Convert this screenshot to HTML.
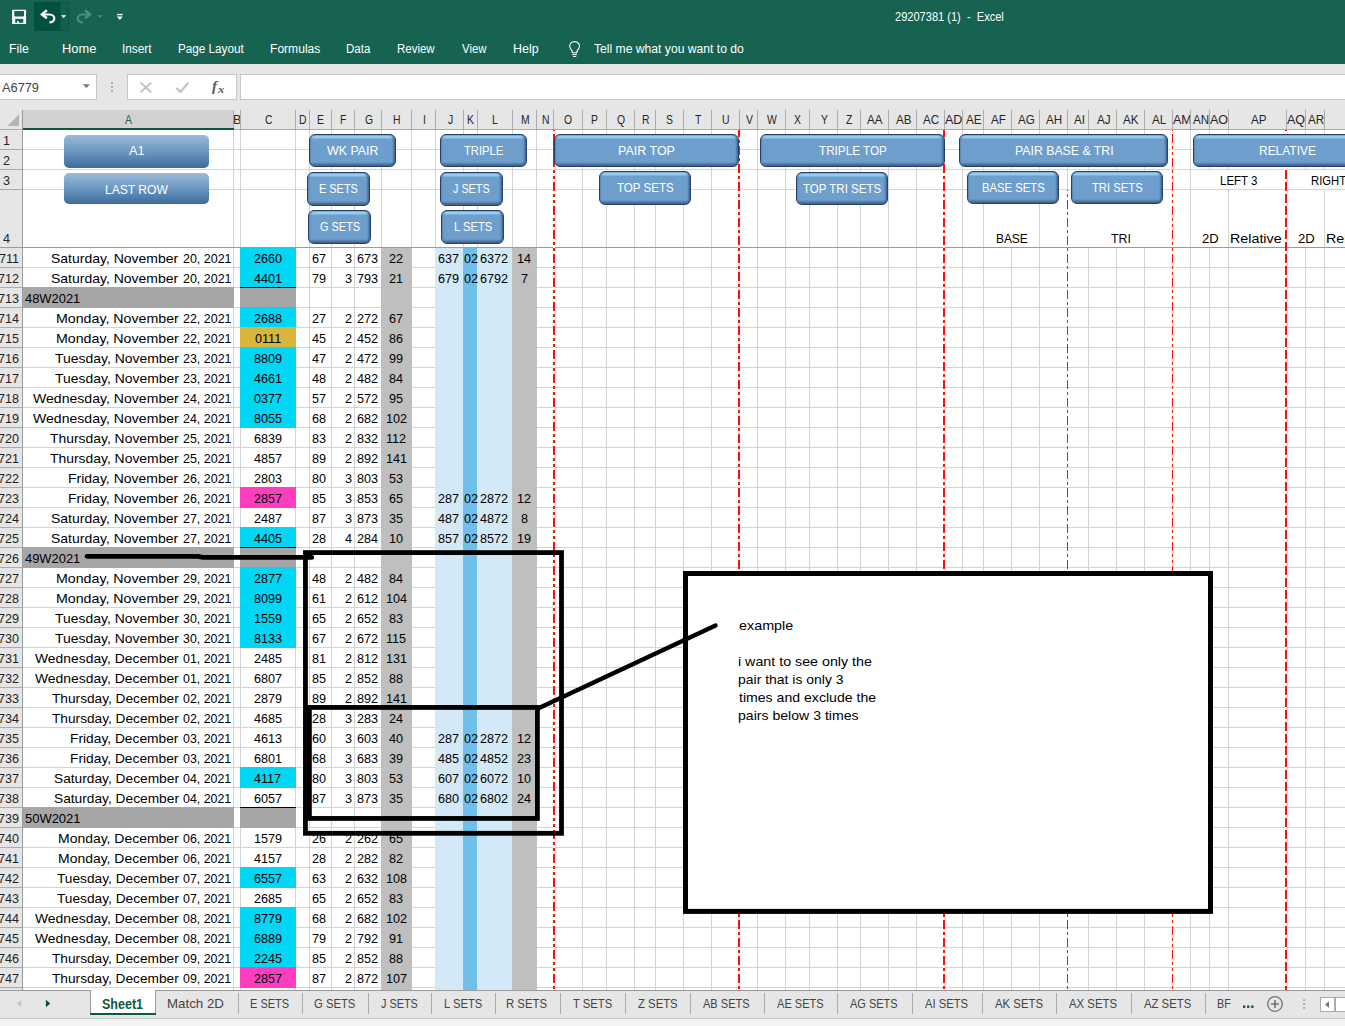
<!DOCTYPE html>
<html lang="en"><head><meta charset="utf-8"><title>29207381 (1) - Excel</title><style>
html,body{margin:0;padding:0}
body{width:1345px;height:1026px;overflow:hidden;position:relative;background:#fff;font-family:"Liberation Sans", sans-serif}
.r{position:absolute;display:block}
.t{position:absolute;white-space:pre;transform-origin:0 50%;display:block}
.gb{position:absolute;border-radius:5px;background:linear-gradient(#9cbbd8 0%,#6f9bc6 45%,#3d6c9b 100%)}
.bb{position:absolute;border:1px solid #25406b;border-radius:6px;background:linear-gradient(#74a6d2 0,#97d0ef 1.4px,#95cceb 2.4px,#6e9fcc 4.4px,#6e9fcc calc(100% - 4px),#52779f calc(100% - 1.8px),#3e5c86 100%);box-shadow:inset -2.5px 0 2px -1px #3f628e,inset 2px 0 1.5px -1px #5a86b4}
</style></head>
<body>
<div class="r" style="left:0;top:110px;width:1345px;height:880px;background:#fff"></div>
<svg class="r" style="left:0;top:0" width="1345" height="1026" shape-rendering="crispEdges"><rect x="233" y="130" width="1" height="20" fill="#d4d4d4"/><rect x="233" y="150" width="1" height="20" fill="#d4d4d4"/><rect x="233" y="170" width="1" height="20" fill="#d4d4d4"/><rect x="233" y="190" width="1" height="58" fill="#d4d4d4"/><rect x="233" y="248" width="1" height="742" fill="#d4d4d4"/><rect x="240" y="130" width="1" height="20" fill="#d4d4d4"/><rect x="240" y="150" width="1" height="20" fill="#d4d4d4"/><rect x="240" y="170" width="1" height="20" fill="#d4d4d4"/><rect x="240" y="190" width="1" height="58" fill="#d4d4d4"/><rect x="240" y="248" width="1" height="742" fill="#d4d4d4"/><rect x="295" y="130" width="1" height="20" fill="#d4d4d4"/><rect x="295" y="150" width="1" height="20" fill="#d4d4d4"/><rect x="295" y="170" width="1" height="20" fill="#d4d4d4"/><rect x="295" y="190" width="1" height="58" fill="#d4d4d4"/><rect x="295" y="248" width="1" height="742" fill="#d4d4d4"/><rect x="309" y="130" width="1" height="20" fill="#d4d4d4"/><rect x="309" y="150" width="1" height="20" fill="#d4d4d4"/><rect x="309" y="170" width="1" height="20" fill="#d4d4d4"/><rect x="309" y="190" width="1" height="58" fill="#d4d4d4"/><rect x="309" y="248" width="1" height="742" fill="#d4d4d4"/><rect x="331" y="130" width="1" height="20" fill="#d4d4d4"/><rect x="331" y="150" width="1" height="20" fill="#d4d4d4"/><rect x="331" y="170" width="1" height="20" fill="#d4d4d4"/><rect x="331" y="190" width="1" height="58" fill="#d4d4d4"/><rect x="331" y="248" width="1" height="742" fill="#d4d4d4"/><rect x="354" y="130" width="1" height="20" fill="#d4d4d4"/><rect x="354" y="150" width="1" height="20" fill="#d4d4d4"/><rect x="354" y="170" width="1" height="20" fill="#d4d4d4"/><rect x="354" y="190" width="1" height="58" fill="#d4d4d4"/><rect x="354" y="248" width="1" height="742" fill="#d4d4d4"/><rect x="381" y="130" width="1" height="20" fill="#d4d4d4"/><rect x="381" y="150" width="1" height="20" fill="#d4d4d4"/><rect x="381" y="170" width="1" height="20" fill="#d4d4d4"/><rect x="381" y="190" width="1" height="58" fill="#d4d4d4"/><rect x="381" y="248" width="1" height="742" fill="#d4d4d4"/><rect x="411" y="130" width="1" height="20" fill="#d4d4d4"/><rect x="411" y="150" width="1" height="20" fill="#d4d4d4"/><rect x="411" y="170" width="1" height="20" fill="#d4d4d4"/><rect x="411" y="190" width="1" height="58" fill="#d4d4d4"/><rect x="411" y="248" width="1" height="742" fill="#d4d4d4"/><rect x="435" y="130" width="1" height="20" fill="#d4d4d4"/><rect x="435" y="150" width="1" height="20" fill="#d4d4d4"/><rect x="435" y="170" width="1" height="20" fill="#d4d4d4"/><rect x="435" y="190" width="1" height="58" fill="#d4d4d4"/><rect x="435" y="248" width="1" height="742" fill="#d4d4d4"/><rect x="463" y="130" width="1" height="20" fill="#d4d4d4"/><rect x="463" y="150" width="1" height="20" fill="#d4d4d4"/><rect x="463" y="170" width="1" height="20" fill="#d4d4d4"/><rect x="463" y="190" width="1" height="58" fill="#d4d4d4"/><rect x="463" y="248" width="1" height="742" fill="#d4d4d4"/><rect x="477" y="130" width="1" height="20" fill="#d4d4d4"/><rect x="477" y="150" width="1" height="20" fill="#d4d4d4"/><rect x="477" y="170" width="1" height="20" fill="#d4d4d4"/><rect x="477" y="190" width="1" height="58" fill="#d4d4d4"/><rect x="477" y="248" width="1" height="742" fill="#d4d4d4"/><rect x="512" y="130" width="1" height="20" fill="#d4d4d4"/><rect x="512" y="150" width="1" height="20" fill="#d4d4d4"/><rect x="512" y="170" width="1" height="20" fill="#d4d4d4"/><rect x="512" y="190" width="1" height="58" fill="#d4d4d4"/><rect x="512" y="248" width="1" height="742" fill="#d4d4d4"/><rect x="536" y="130" width="1" height="20" fill="#d4d4d4"/><rect x="536" y="150" width="1" height="20" fill="#d4d4d4"/><rect x="536" y="170" width="1" height="20" fill="#d4d4d4"/><rect x="536" y="190" width="1" height="58" fill="#d4d4d4"/><rect x="536" y="248" width="1" height="742" fill="#d4d4d4"/><rect x="582" y="130" width="1" height="20" fill="#d4d4d4"/><rect x="582" y="150" width="1" height="20" fill="#d4d4d4"/><rect x="582" y="170" width="1" height="20" fill="#d4d4d4"/><rect x="582" y="190" width="1" height="58" fill="#d4d4d4"/><rect x="582" y="248" width="1" height="742" fill="#d4d4d4"/><rect x="606" y="130" width="1" height="20" fill="#d4d4d4"/><rect x="606" y="150" width="1" height="20" fill="#d4d4d4"/><rect x="606" y="170" width="1" height="20" fill="#d4d4d4"/><rect x="606" y="190" width="1" height="58" fill="#d4d4d4"/><rect x="606" y="248" width="1" height="742" fill="#d4d4d4"/><rect x="634" y="130" width="1" height="20" fill="#d4d4d4"/><rect x="634" y="150" width="1" height="20" fill="#d4d4d4"/><rect x="634" y="170" width="1" height="20" fill="#d4d4d4"/><rect x="634" y="190" width="1" height="58" fill="#d4d4d4"/><rect x="634" y="248" width="1" height="742" fill="#d4d4d4"/><rect x="655" y="130" width="1" height="20" fill="#d4d4d4"/><rect x="655" y="150" width="1" height="20" fill="#d4d4d4"/><rect x="655" y="170" width="1" height="20" fill="#d4d4d4"/><rect x="655" y="190" width="1" height="58" fill="#d4d4d4"/><rect x="655" y="248" width="1" height="742" fill="#d4d4d4"/><rect x="683" y="130" width="1" height="20" fill="#d4d4d4"/><rect x="683" y="150" width="1" height="20" fill="#d4d4d4"/><rect x="683" y="170" width="1" height="20" fill="#d4d4d4"/><rect x="683" y="190" width="1" height="58" fill="#d4d4d4"/><rect x="683" y="248" width="1" height="742" fill="#d4d4d4"/><rect x="711" y="130" width="1" height="20" fill="#d4d4d4"/><rect x="711" y="150" width="1" height="20" fill="#d4d4d4"/><rect x="711" y="170" width="1" height="20" fill="#d4d4d4"/><rect x="711" y="190" width="1" height="58" fill="#d4d4d4"/><rect x="711" y="248" width="1" height="742" fill="#d4d4d4"/><rect x="757" y="130" width="1" height="20" fill="#d4d4d4"/><rect x="757" y="150" width="1" height="20" fill="#d4d4d4"/><rect x="757" y="170" width="1" height="20" fill="#d4d4d4"/><rect x="757" y="190" width="1" height="58" fill="#d4d4d4"/><rect x="757" y="248" width="1" height="742" fill="#d4d4d4"/><rect x="785" y="130" width="1" height="20" fill="#d4d4d4"/><rect x="785" y="150" width="1" height="20" fill="#d4d4d4"/><rect x="785" y="170" width="1" height="20" fill="#d4d4d4"/><rect x="785" y="190" width="1" height="58" fill="#d4d4d4"/><rect x="785" y="248" width="1" height="742" fill="#d4d4d4"/><rect x="809" y="130" width="1" height="20" fill="#d4d4d4"/><rect x="809" y="150" width="1" height="20" fill="#d4d4d4"/><rect x="809" y="170" width="1" height="20" fill="#d4d4d4"/><rect x="809" y="190" width="1" height="58" fill="#d4d4d4"/><rect x="809" y="248" width="1" height="742" fill="#d4d4d4"/><rect x="837" y="130" width="1" height="20" fill="#d4d4d4"/><rect x="837" y="150" width="1" height="20" fill="#d4d4d4"/><rect x="837" y="170" width="1" height="20" fill="#d4d4d4"/><rect x="837" y="190" width="1" height="58" fill="#d4d4d4"/><rect x="837" y="248" width="1" height="742" fill="#d4d4d4"/><rect x="860" y="130" width="1" height="20" fill="#d4d4d4"/><rect x="860" y="150" width="1" height="20" fill="#d4d4d4"/><rect x="860" y="170" width="1" height="20" fill="#d4d4d4"/><rect x="860" y="190" width="1" height="58" fill="#d4d4d4"/><rect x="860" y="248" width="1" height="742" fill="#d4d4d4"/><rect x="888" y="130" width="1" height="20" fill="#d4d4d4"/><rect x="888" y="150" width="1" height="20" fill="#d4d4d4"/><rect x="888" y="170" width="1" height="20" fill="#d4d4d4"/><rect x="888" y="190" width="1" height="58" fill="#d4d4d4"/><rect x="888" y="248" width="1" height="742" fill="#d4d4d4"/><rect x="916" y="130" width="1" height="20" fill="#d4d4d4"/><rect x="916" y="150" width="1" height="20" fill="#d4d4d4"/><rect x="916" y="170" width="1" height="20" fill="#d4d4d4"/><rect x="916" y="190" width="1" height="58" fill="#d4d4d4"/><rect x="916" y="248" width="1" height="742" fill="#d4d4d4"/><rect x="962" y="130" width="1" height="20" fill="#d4d4d4"/><rect x="962" y="150" width="1" height="20" fill="#d4d4d4"/><rect x="962" y="170" width="1" height="20" fill="#d4d4d4"/><rect x="962" y="190" width="1" height="58" fill="#d4d4d4"/><rect x="962" y="248" width="1" height="742" fill="#d4d4d4"/><rect x="983" y="130" width="1" height="20" fill="#d4d4d4"/><rect x="983" y="150" width="1" height="20" fill="#d4d4d4"/><rect x="983" y="170" width="1" height="20" fill="#d4d4d4"/><rect x="983" y="190" width="1" height="58" fill="#d4d4d4"/><rect x="983" y="248" width="1" height="742" fill="#d4d4d4"/><rect x="1011" y="130" width="1" height="20" fill="#d4d4d4"/><rect x="1011" y="150" width="1" height="20" fill="#d4d4d4"/><rect x="1011" y="170" width="1" height="20" fill="#d4d4d4"/><rect x="1011" y="248" width="1" height="742" fill="#d4d4d4"/><rect x="1039" y="130" width="1" height="20" fill="#d4d4d4"/><rect x="1039" y="150" width="1" height="20" fill="#d4d4d4"/><rect x="1039" y="170" width="1" height="20" fill="#d4d4d4"/><rect x="1039" y="190" width="1" height="58" fill="#d4d4d4"/><rect x="1039" y="248" width="1" height="742" fill="#d4d4d4"/><rect x="1067" y="130" width="1" height="20" fill="#d4d4d4"/><rect x="1067" y="150" width="1" height="20" fill="#d4d4d4"/><rect x="1067" y="170" width="1" height="20" fill="#d4d4d4"/><rect x="1088" y="130" width="1" height="20" fill="#d4d4d4"/><rect x="1088" y="150" width="1" height="20" fill="#d4d4d4"/><rect x="1088" y="170" width="1" height="20" fill="#d4d4d4"/><rect x="1088" y="248" width="1" height="742" fill="#d4d4d4"/><rect x="1116" y="130" width="1" height="20" fill="#d4d4d4"/><rect x="1116" y="150" width="1" height="20" fill="#d4d4d4"/><rect x="1116" y="170" width="1" height="20" fill="#d4d4d4"/><rect x="1116" y="248" width="1" height="742" fill="#d4d4d4"/><rect x="1144" y="130" width="1" height="20" fill="#d4d4d4"/><rect x="1144" y="150" width="1" height="20" fill="#d4d4d4"/><rect x="1144" y="170" width="1" height="20" fill="#d4d4d4"/><rect x="1144" y="248" width="1" height="742" fill="#d4d4d4"/><rect x="1190" y="130" width="1" height="20" fill="#d4d4d4"/><rect x="1190" y="150" width="1" height="20" fill="#d4d4d4"/><rect x="1190" y="170" width="1" height="20" fill="#d4d4d4"/><rect x="1190" y="190" width="1" height="58" fill="#d4d4d4"/><rect x="1190" y="248" width="1" height="742" fill="#d4d4d4"/><rect x="1209" y="130" width="1" height="20" fill="#d4d4d4"/><rect x="1209" y="150" width="1" height="20" fill="#d4d4d4"/><rect x="1209" y="248" width="1" height="742" fill="#d4d4d4"/><rect x="1228" y="130" width="1" height="20" fill="#d4d4d4"/><rect x="1228" y="150" width="1" height="20" fill="#d4d4d4"/><rect x="1228" y="190" width="1" height="58" fill="#d4d4d4"/><rect x="1228" y="248" width="1" height="742" fill="#d4d4d4"/><rect x="1305" y="130" width="1" height="20" fill="#d4d4d4"/><rect x="1305" y="150" width="1" height="20" fill="#d4d4d4"/><rect x="1305" y="248" width="1" height="742" fill="#d4d4d4"/><rect x="1324" y="130" width="1" height="20" fill="#d4d4d4"/><rect x="1324" y="150" width="1" height="20" fill="#d4d4d4"/><rect x="1324" y="190" width="1" height="58" fill="#d4d4d4"/><rect x="1324" y="248" width="1" height="742" fill="#d4d4d4"/><rect x="23" y="149" width="1322" height="1" fill="#d4d4d4"/><rect x="23" y="169" width="1322" height="1" fill="#d4d4d4"/><rect x="23" y="189" width="1322" height="1" fill="#d4d4d4"/><rect x="23" y="267" width="1322" height="1" fill="#d4d4d4"/><rect x="23" y="287" width="1322" height="1" fill="#d4d4d4"/><rect x="23" y="307" width="1322" height="1" fill="#d4d4d4"/><rect x="23" y="327" width="1322" height="1" fill="#d4d4d4"/><rect x="23" y="347" width="1322" height="1" fill="#d4d4d4"/><rect x="23" y="367" width="1322" height="1" fill="#d4d4d4"/><rect x="23" y="387" width="1322" height="1" fill="#d4d4d4"/><rect x="23" y="407" width="1322" height="1" fill="#d4d4d4"/><rect x="23" y="427" width="1322" height="1" fill="#d4d4d4"/><rect x="23" y="447" width="1322" height="1" fill="#d4d4d4"/><rect x="23" y="467" width="1322" height="1" fill="#d4d4d4"/><rect x="23" y="487" width="1322" height="1" fill="#d4d4d4"/><rect x="23" y="507" width="1322" height="1" fill="#d4d4d4"/><rect x="23" y="527" width="1322" height="1" fill="#d4d4d4"/><rect x="23" y="547" width="1322" height="1" fill="#d4d4d4"/><rect x="23" y="567" width="1322" height="1" fill="#d4d4d4"/><rect x="23" y="587" width="1322" height="1" fill="#d4d4d4"/><rect x="23" y="607" width="1322" height="1" fill="#d4d4d4"/><rect x="23" y="627" width="1322" height="1" fill="#d4d4d4"/><rect x="23" y="647" width="1322" height="1" fill="#d4d4d4"/><rect x="23" y="667" width="1322" height="1" fill="#d4d4d4"/><rect x="23" y="687" width="1322" height="1" fill="#d4d4d4"/><rect x="23" y="707" width="1322" height="1" fill="#d4d4d4"/><rect x="23" y="727" width="1322" height="1" fill="#d4d4d4"/><rect x="23" y="747" width="1322" height="1" fill="#d4d4d4"/><rect x="23" y="767" width="1322" height="1" fill="#d4d4d4"/><rect x="23" y="787" width="1322" height="1" fill="#d4d4d4"/><rect x="23" y="807" width="1322" height="1" fill="#d4d4d4"/><rect x="23" y="827" width="1322" height="1" fill="#d4d4d4"/><rect x="23" y="847" width="1322" height="1" fill="#d4d4d4"/><rect x="23" y="867" width="1322" height="1" fill="#d4d4d4"/><rect x="23" y="887" width="1322" height="1" fill="#d4d4d4"/><rect x="23" y="907" width="1322" height="1" fill="#d4d4d4"/><rect x="23" y="927" width="1322" height="1" fill="#d4d4d4"/><rect x="23" y="947" width="1322" height="1" fill="#d4d4d4"/><rect x="23" y="967" width="1322" height="1" fill="#d4d4d4"/><rect x="23" y="987" width="1322" height="1" fill="#d4d4d4"/></svg>
<div class="r" style="left:381px;top:247px;width:31px;height:741px;background:#bfbfbf;"></div>
<div class="r" style="left:435px;top:247px;width:29px;height:741px;background:#d3e9f7;"></div>
<div class="r" style="left:463px;top:247px;width:15px;height:741px;background:#6ec0eb;"></div>
<div class="r" style="left:477px;top:247px;width:36px;height:741px;background:#d3e9f7;"></div>
<div class="r" style="left:512px;top:247px;width:25px;height:741px;background:#bfbfbf;"></div>
<div class="r" style="left:381px;top:988px;width:31px;height:2px;background:#bfbfbf;"></div>
<div class="r" style="left:435px;top:988px;width:29px;height:2px;background:#d3e9f7;"></div>
<div class="r" style="left:463px;top:988px;width:15px;height:2px;background:#6ec0eb;"></div>
<div class="r" style="left:477px;top:988px;width:36px;height:2px;background:#d3e9f7;"></div>
<div class="r" style="left:512px;top:988px;width:25px;height:2px;background:#bfbfbf;"></div>
<div class="r" style="left:240px;top:247px;width:56px;height:21px;background:#00d7f5;"></div>
<div class="r" style="left:240px;top:267px;width:56px;height:21px;background:#00d7f5;"></div>
<div class="r" style="left:22px;top:287px;width:212px;height:21px;background:#a6a6a6;"></div>
<div class="r" style="left:240px;top:287px;width:56px;height:21px;background:#a6a6a6;"></div>
<div class="r" style="left:240px;top:307px;width:56px;height:21px;background:#00d7f5;"></div>
<div class="r" style="left:240px;top:327px;width:56px;height:21px;background:#d9b53b;"></div>
<div class="r" style="left:240px;top:347px;width:56px;height:21px;background:#00d7f5;"></div>
<div class="r" style="left:240px;top:367px;width:56px;height:21px;background:#00d7f5;"></div>
<div class="r" style="left:240px;top:387px;width:56px;height:21px;background:#00d7f5;"></div>
<div class="r" style="left:240px;top:407px;width:56px;height:21px;background:#00d7f5;"></div>
<div class="r" style="left:240px;top:487px;width:56px;height:21px;background:#ff3ebf;"></div>
<div class="r" style="left:240px;top:527px;width:56px;height:21px;background:#00d7f5;"></div>
<div class="r" style="left:22px;top:547px;width:212px;height:21px;background:#a6a6a6;"></div>
<div class="r" style="left:240px;top:547px;width:56px;height:21px;background:#a6a6a6;"></div>
<div class="r" style="left:240px;top:567px;width:56px;height:21px;background:#00d7f5;"></div>
<div class="r" style="left:240px;top:587px;width:56px;height:21px;background:#00d7f5;"></div>
<div class="r" style="left:240px;top:607px;width:56px;height:21px;background:#00d7f5;"></div>
<div class="r" style="left:240px;top:627px;width:56px;height:21px;background:#00d7f5;"></div>
<div class="r" style="left:240px;top:767px;width:56px;height:21px;background:#00d7f5;"></div>
<div class="r" style="left:22px;top:807px;width:212px;height:21px;background:#a6a6a6;"></div>
<div class="r" style="left:240px;top:807px;width:56px;height:21px;background:#a6a6a6;"></div>
<div class="r" style="left:240px;top:867px;width:56px;height:21px;background:#00d7f5;"></div>
<div class="r" style="left:240px;top:907px;width:56px;height:21px;background:#00d7f5;"></div>
<div class="r" style="left:240px;top:927px;width:56px;height:21px;background:#00d7f5;"></div>
<div class="r" style="left:240px;top:947px;width:56px;height:21px;background:#00d7f5;"></div>
<div class="r" style="left:240px;top:967px;width:56px;height:21px;background:#ff3ebf;"></div>
<div class="r" style="left:0px;top:247px;width:1345px;height:1px;background:#9b9b9b;"></div>
<div class="r" style="left:240px;top:287px;width:56px;height:1px;background:#000;"></div>
<div class="r" style="left:240px;top:547px;width:56px;height:1px;background:#000;"></div>
<div class="r" style="left:240px;top:807px;width:56px;height:1px;background:#000;"></div>
<span class="t" style="left:51.47px;top:248.07px;font-size:13.5px;line-height:22px;color:#000;transform:scaleX(1.0361);">Saturday, November</span>
<span class="t" style="left:182.51px;top:248.07px;font-size:13.5px;line-height:22px;color:#000;transform:scaleX(0.9229);">20, 2021</span>
<span class="t" style="left:253.95px;top:248.07px;font-size:13.5px;line-height:22px;color:#000;transform:scaleX(0.9350);">2660</span>
<span class="t" style="left:311.80px;top:248.07px;font-size:13.5px;line-height:22px;color:#000;transform:scaleX(0.9350);">67</span>
<span class="t" style="left:344.57px;top:248.07px;font-size:13.5px;line-height:22px;color:#000;transform:scaleX(0.9350);">3</span>
<span class="t" style="left:357.17px;top:248.07px;font-size:13.5px;line-height:22px;color:#000;transform:scaleX(0.9350);">673</span>
<span class="t" style="left:389.47px;top:248.07px;font-size:13.5px;line-height:22px;color:#000;transform:scaleX(0.9350);">22</span>
<span class="t" style="left:438.17px;top:248.07px;font-size:13.5px;line-height:22px;color:#000;transform:scaleX(0.9350);">637</span>
<span class="t" style="left:464.07px;top:248.07px;font-size:13.5px;line-height:22px;color:#000;transform:scaleX(0.9350);">02</span>
<span class="t" style="left:480.05px;top:248.07px;font-size:13.5px;line-height:22px;color:#000;transform:scaleX(0.9350);">6372</span>
<span class="t" style="left:517.47px;top:248.07px;font-size:13.5px;line-height:22px;color:#000;transform:scaleX(0.9350);">14</span>
<span class="t" style="left:51.47px;top:268.07px;font-size:13.5px;line-height:22px;color:#000;transform:scaleX(1.0361);">Saturday, November</span>
<span class="t" style="left:182.51px;top:268.07px;font-size:13.5px;line-height:22px;color:#000;transform:scaleX(0.9229);">20, 2021</span>
<span class="t" style="left:253.95px;top:268.07px;font-size:13.5px;line-height:22px;color:#000;transform:scaleX(0.9350);">4401</span>
<span class="t" style="left:311.80px;top:268.07px;font-size:13.5px;line-height:22px;color:#000;transform:scaleX(0.9350);">79</span>
<span class="t" style="left:344.57px;top:268.07px;font-size:13.5px;line-height:22px;color:#000;transform:scaleX(0.9350);">3</span>
<span class="t" style="left:357.17px;top:268.07px;font-size:13.5px;line-height:22px;color:#000;transform:scaleX(0.9350);">793</span>
<span class="t" style="left:389.47px;top:268.07px;font-size:13.5px;line-height:22px;color:#000;transform:scaleX(0.9350);">21</span>
<span class="t" style="left:438.17px;top:268.07px;font-size:13.5px;line-height:22px;color:#000;transform:scaleX(0.9350);">679</span>
<span class="t" style="left:464.07px;top:268.07px;font-size:13.5px;line-height:22px;color:#000;transform:scaleX(0.9350);">02</span>
<span class="t" style="left:480.05px;top:268.07px;font-size:13.5px;line-height:22px;color:#000;transform:scaleX(0.9350);">6792</span>
<span class="t" style="left:520.99px;top:268.07px;font-size:13.5px;line-height:22px;color:#000;transform:scaleX(0.9350);">7</span>
<span class="t" style="left:24.76px;top:288.07px;font-size:13.5px;line-height:22px;color:#000;transform:scaleX(0.9561);">48W2021</span>
<span class="t" style="left:55.95px;top:308.07px;font-size:13.5px;line-height:22px;color:#000;transform:scaleX(1.0511);">Monday, November</span>
<span class="t" style="left:182.51px;top:308.07px;font-size:13.5px;line-height:22px;color:#000;transform:scaleX(0.9229);">22, 2021</span>
<span class="t" style="left:253.95px;top:308.07px;font-size:13.5px;line-height:22px;color:#000;transform:scaleX(0.9350);">2688</span>
<span class="t" style="left:311.80px;top:308.07px;font-size:13.5px;line-height:22px;color:#000;transform:scaleX(0.9350);">27</span>
<span class="t" style="left:344.57px;top:308.07px;font-size:13.5px;line-height:22px;color:#000;transform:scaleX(0.9350);">2</span>
<span class="t" style="left:357.17px;top:308.07px;font-size:13.5px;line-height:22px;color:#000;transform:scaleX(0.9350);">272</span>
<span class="t" style="left:389.47px;top:308.07px;font-size:13.5px;line-height:22px;color:#000;transform:scaleX(0.9350);">67</span>
<span class="t" style="left:55.95px;top:328.07px;font-size:13.5px;line-height:22px;color:#000;transform:scaleX(1.0511);">Monday, November</span>
<span class="t" style="left:182.51px;top:328.07px;font-size:13.5px;line-height:22px;color:#000;transform:scaleX(0.9229);">22, 2021</span>
<span class="t" style="left:254.90px;top:328.07px;font-size:13.5px;line-height:22px;color:#000;transform:scaleX(0.9350);">0111</span>
<span class="t" style="left:311.80px;top:328.07px;font-size:13.5px;line-height:22px;color:#000;transform:scaleX(0.9350);">45</span>
<span class="t" style="left:344.57px;top:328.07px;font-size:13.5px;line-height:22px;color:#000;transform:scaleX(0.9350);">2</span>
<span class="t" style="left:357.17px;top:328.07px;font-size:13.5px;line-height:22px;color:#000;transform:scaleX(0.9350);">452</span>
<span class="t" style="left:389.47px;top:328.07px;font-size:13.5px;line-height:22px;color:#000;transform:scaleX(0.9350);">86</span>
<span class="t" style="left:54.74px;top:348.07px;font-size:13.5px;line-height:22px;color:#000;transform:scaleX(1.0326);">Tuesday, November</span>
<span class="t" style="left:182.51px;top:348.07px;font-size:13.5px;line-height:22px;color:#000;transform:scaleX(0.9229);">23, 2021</span>
<span class="t" style="left:253.95px;top:348.07px;font-size:13.5px;line-height:22px;color:#000;transform:scaleX(0.9350);">8809</span>
<span class="t" style="left:311.80px;top:348.07px;font-size:13.5px;line-height:22px;color:#000;transform:scaleX(0.9350);">47</span>
<span class="t" style="left:344.57px;top:348.07px;font-size:13.5px;line-height:22px;color:#000;transform:scaleX(0.9350);">2</span>
<span class="t" style="left:357.17px;top:348.07px;font-size:13.5px;line-height:22px;color:#000;transform:scaleX(0.9350);">472</span>
<span class="t" style="left:389.47px;top:348.07px;font-size:13.5px;line-height:22px;color:#000;transform:scaleX(0.9350);">99</span>
<span class="t" style="left:54.74px;top:368.07px;font-size:13.5px;line-height:22px;color:#000;transform:scaleX(1.0326);">Tuesday, November</span>
<span class="t" style="left:182.51px;top:368.07px;font-size:13.5px;line-height:22px;color:#000;transform:scaleX(0.9229);">23, 2021</span>
<span class="t" style="left:253.95px;top:368.07px;font-size:13.5px;line-height:22px;color:#000;transform:scaleX(0.9350);">4661</span>
<span class="t" style="left:311.80px;top:368.07px;font-size:13.5px;line-height:22px;color:#000;transform:scaleX(0.9350);">48</span>
<span class="t" style="left:344.57px;top:368.07px;font-size:13.5px;line-height:22px;color:#000;transform:scaleX(0.9350);">2</span>
<span class="t" style="left:357.17px;top:368.07px;font-size:13.5px;line-height:22px;color:#000;transform:scaleX(0.9350);">482</span>
<span class="t" style="left:389.47px;top:368.07px;font-size:13.5px;line-height:22px;color:#000;transform:scaleX(0.9350);">84</span>
<span class="t" style="left:33.00px;top:388.07px;font-size:13.5px;line-height:22px;color:#000;transform:scaleX(1.0423);">Wednesday, November</span>
<span class="t" style="left:182.51px;top:388.07px;font-size:13.5px;line-height:22px;color:#000;transform:scaleX(0.9229);">24, 2021</span>
<span class="t" style="left:253.95px;top:388.07px;font-size:13.5px;line-height:22px;color:#000;transform:scaleX(0.9350);">0377</span>
<span class="t" style="left:311.80px;top:388.07px;font-size:13.5px;line-height:22px;color:#000;transform:scaleX(0.9350);">57</span>
<span class="t" style="left:344.57px;top:388.07px;font-size:13.5px;line-height:22px;color:#000;transform:scaleX(0.9350);">2</span>
<span class="t" style="left:357.17px;top:388.07px;font-size:13.5px;line-height:22px;color:#000;transform:scaleX(0.9350);">572</span>
<span class="t" style="left:389.47px;top:388.07px;font-size:13.5px;line-height:22px;color:#000;transform:scaleX(0.9350);">95</span>
<span class="t" style="left:33.00px;top:408.07px;font-size:13.5px;line-height:22px;color:#000;transform:scaleX(1.0423);">Wednesday, November</span>
<span class="t" style="left:182.51px;top:408.07px;font-size:13.5px;line-height:22px;color:#000;transform:scaleX(0.9229);">24, 2021</span>
<span class="t" style="left:253.95px;top:408.07px;font-size:13.5px;line-height:22px;color:#000;transform:scaleX(0.9350);">8055</span>
<span class="t" style="left:311.80px;top:408.07px;font-size:13.5px;line-height:22px;color:#000;transform:scaleX(0.9350);">68</span>
<span class="t" style="left:344.57px;top:408.07px;font-size:13.5px;line-height:22px;color:#000;transform:scaleX(0.9350);">2</span>
<span class="t" style="left:357.17px;top:408.07px;font-size:13.5px;line-height:22px;color:#000;transform:scaleX(0.9350);">682</span>
<span class="t" style="left:385.97px;top:408.07px;font-size:13.5px;line-height:22px;color:#000;transform:scaleX(0.9350);">102</span>
<span class="t" style="left:49.99px;top:428.07px;font-size:13.5px;line-height:22px;color:#000;transform:scaleX(1.0293);">Thursday, November</span>
<span class="t" style="left:182.51px;top:428.07px;font-size:13.5px;line-height:22px;color:#000;transform:scaleX(0.9229);">25, 2021</span>
<span class="t" style="left:253.95px;top:428.07px;font-size:13.5px;line-height:22px;color:#000;transform:scaleX(0.9350);">6839</span>
<span class="t" style="left:311.80px;top:428.07px;font-size:13.5px;line-height:22px;color:#000;transform:scaleX(0.9350);">83</span>
<span class="t" style="left:344.57px;top:428.07px;font-size:13.5px;line-height:22px;color:#000;transform:scaleX(0.9350);">2</span>
<span class="t" style="left:357.17px;top:428.07px;font-size:13.5px;line-height:22px;color:#000;transform:scaleX(0.9350);">832</span>
<span class="t" style="left:386.43px;top:428.07px;font-size:13.5px;line-height:22px;color:#000;transform:scaleX(0.9350);">112</span>
<span class="t" style="left:49.99px;top:448.07px;font-size:13.5px;line-height:22px;color:#000;transform:scaleX(1.0293);">Thursday, November</span>
<span class="t" style="left:182.51px;top:448.07px;font-size:13.5px;line-height:22px;color:#000;transform:scaleX(0.9229);">25, 2021</span>
<span class="t" style="left:253.95px;top:448.07px;font-size:13.5px;line-height:22px;color:#000;transform:scaleX(0.9350);">4857</span>
<span class="t" style="left:311.80px;top:448.07px;font-size:13.5px;line-height:22px;color:#000;transform:scaleX(0.9350);">89</span>
<span class="t" style="left:344.57px;top:448.07px;font-size:13.5px;line-height:22px;color:#000;transform:scaleX(0.9350);">2</span>
<span class="t" style="left:357.17px;top:448.07px;font-size:13.5px;line-height:22px;color:#000;transform:scaleX(0.9350);">892</span>
<span class="t" style="left:385.97px;top:448.07px;font-size:13.5px;line-height:22px;color:#000;transform:scaleX(0.9350);">141</span>
<span class="t" style="left:68.46px;top:468.07px;font-size:13.5px;line-height:22px;color:#000;transform:scaleX(1.0371);">Friday, November</span>
<span class="t" style="left:182.51px;top:468.07px;font-size:13.5px;line-height:22px;color:#000;transform:scaleX(0.9229);">26, 2021</span>
<span class="t" style="left:253.95px;top:468.07px;font-size:13.5px;line-height:22px;color:#000;transform:scaleX(0.9350);">2803</span>
<span class="t" style="left:311.80px;top:468.07px;font-size:13.5px;line-height:22px;color:#000;transform:scaleX(0.9350);">80</span>
<span class="t" style="left:344.57px;top:468.07px;font-size:13.5px;line-height:22px;color:#000;transform:scaleX(0.9350);">3</span>
<span class="t" style="left:357.17px;top:468.07px;font-size:13.5px;line-height:22px;color:#000;transform:scaleX(0.9350);">803</span>
<span class="t" style="left:389.47px;top:468.07px;font-size:13.5px;line-height:22px;color:#000;transform:scaleX(0.9350);">53</span>
<span class="t" style="left:68.46px;top:488.07px;font-size:13.5px;line-height:22px;color:#000;transform:scaleX(1.0371);">Friday, November</span>
<span class="t" style="left:182.51px;top:488.07px;font-size:13.5px;line-height:22px;color:#000;transform:scaleX(0.9229);">26, 2021</span>
<span class="t" style="left:253.95px;top:488.07px;font-size:13.5px;line-height:22px;color:#000;transform:scaleX(0.9350);">2857</span>
<span class="t" style="left:311.80px;top:488.07px;font-size:13.5px;line-height:22px;color:#000;transform:scaleX(0.9350);">85</span>
<span class="t" style="left:344.57px;top:488.07px;font-size:13.5px;line-height:22px;color:#000;transform:scaleX(0.9350);">3</span>
<span class="t" style="left:357.17px;top:488.07px;font-size:13.5px;line-height:22px;color:#000;transform:scaleX(0.9350);">853</span>
<span class="t" style="left:389.47px;top:488.07px;font-size:13.5px;line-height:22px;color:#000;transform:scaleX(0.9350);">65</span>
<span class="t" style="left:438.17px;top:488.07px;font-size:13.5px;line-height:22px;color:#000;transform:scaleX(0.9350);">287</span>
<span class="t" style="left:464.07px;top:488.07px;font-size:13.5px;line-height:22px;color:#000;transform:scaleX(0.9350);">02</span>
<span class="t" style="left:480.05px;top:488.07px;font-size:13.5px;line-height:22px;color:#000;transform:scaleX(0.9350);">2872</span>
<span class="t" style="left:517.47px;top:488.07px;font-size:13.5px;line-height:22px;color:#000;transform:scaleX(0.9350);">12</span>
<span class="t" style="left:51.47px;top:508.07px;font-size:13.5px;line-height:22px;color:#000;transform:scaleX(1.0361);">Saturday, November</span>
<span class="t" style="left:182.51px;top:508.07px;font-size:13.5px;line-height:22px;color:#000;transform:scaleX(0.9229);">27, 2021</span>
<span class="t" style="left:253.95px;top:508.07px;font-size:13.5px;line-height:22px;color:#000;transform:scaleX(0.9350);">2487</span>
<span class="t" style="left:311.80px;top:508.07px;font-size:13.5px;line-height:22px;color:#000;transform:scaleX(0.9350);">87</span>
<span class="t" style="left:344.57px;top:508.07px;font-size:13.5px;line-height:22px;color:#000;transform:scaleX(0.9350);">3</span>
<span class="t" style="left:357.17px;top:508.07px;font-size:13.5px;line-height:22px;color:#000;transform:scaleX(0.9350);">873</span>
<span class="t" style="left:389.47px;top:508.07px;font-size:13.5px;line-height:22px;color:#000;transform:scaleX(0.9350);">35</span>
<span class="t" style="left:438.17px;top:508.07px;font-size:13.5px;line-height:22px;color:#000;transform:scaleX(0.9350);">487</span>
<span class="t" style="left:464.07px;top:508.07px;font-size:13.5px;line-height:22px;color:#000;transform:scaleX(0.9350);">02</span>
<span class="t" style="left:480.05px;top:508.07px;font-size:13.5px;line-height:22px;color:#000;transform:scaleX(0.9350);">4872</span>
<span class="t" style="left:520.99px;top:508.07px;font-size:13.5px;line-height:22px;color:#000;transform:scaleX(0.9350);">8</span>
<span class="t" style="left:51.47px;top:528.07px;font-size:13.5px;line-height:22px;color:#000;transform:scaleX(1.0361);">Saturday, November</span>
<span class="t" style="left:182.51px;top:528.07px;font-size:13.5px;line-height:22px;color:#000;transform:scaleX(0.9229);">27, 2021</span>
<span class="t" style="left:253.95px;top:528.07px;font-size:13.5px;line-height:22px;color:#000;transform:scaleX(0.9350);">4405</span>
<span class="t" style="left:311.80px;top:528.07px;font-size:13.5px;line-height:22px;color:#000;transform:scaleX(0.9350);">28</span>
<span class="t" style="left:344.57px;top:528.07px;font-size:13.5px;line-height:22px;color:#000;transform:scaleX(0.9350);">4</span>
<span class="t" style="left:357.17px;top:528.07px;font-size:13.5px;line-height:22px;color:#000;transform:scaleX(0.9350);">284</span>
<span class="t" style="left:389.47px;top:528.07px;font-size:13.5px;line-height:22px;color:#000;transform:scaleX(0.9350);">10</span>
<span class="t" style="left:438.17px;top:528.07px;font-size:13.5px;line-height:22px;color:#000;transform:scaleX(0.9350);">857</span>
<span class="t" style="left:464.07px;top:528.07px;font-size:13.5px;line-height:22px;color:#000;transform:scaleX(0.9350);">02</span>
<span class="t" style="left:480.05px;top:528.07px;font-size:13.5px;line-height:22px;color:#000;transform:scaleX(0.9350);">8572</span>
<span class="t" style="left:517.47px;top:528.07px;font-size:13.5px;line-height:22px;color:#000;transform:scaleX(0.9350);">19</span>
<span class="t" style="left:24.76px;top:548.07px;font-size:13.5px;line-height:22px;color:#000;transform:scaleX(0.9561);">49W2021</span>
<span class="t" style="left:55.95px;top:568.07px;font-size:13.5px;line-height:22px;color:#000;transform:scaleX(1.0511);">Monday, November</span>
<span class="t" style="left:182.51px;top:568.07px;font-size:13.5px;line-height:22px;color:#000;transform:scaleX(0.9229);">29, 2021</span>
<span class="t" style="left:253.95px;top:568.07px;font-size:13.5px;line-height:22px;color:#000;transform:scaleX(0.9350);">2877</span>
<span class="t" style="left:311.80px;top:568.07px;font-size:13.5px;line-height:22px;color:#000;transform:scaleX(0.9350);">48</span>
<span class="t" style="left:344.57px;top:568.07px;font-size:13.5px;line-height:22px;color:#000;transform:scaleX(0.9350);">2</span>
<span class="t" style="left:357.17px;top:568.07px;font-size:13.5px;line-height:22px;color:#000;transform:scaleX(0.9350);">482</span>
<span class="t" style="left:389.47px;top:568.07px;font-size:13.5px;line-height:22px;color:#000;transform:scaleX(0.9350);">84</span>
<span class="t" style="left:55.95px;top:588.07px;font-size:13.5px;line-height:22px;color:#000;transform:scaleX(1.0511);">Monday, November</span>
<span class="t" style="left:182.51px;top:588.07px;font-size:13.5px;line-height:22px;color:#000;transform:scaleX(0.9229);">29, 2021</span>
<span class="t" style="left:253.95px;top:588.07px;font-size:13.5px;line-height:22px;color:#000;transform:scaleX(0.9350);">8099</span>
<span class="t" style="left:311.80px;top:588.07px;font-size:13.5px;line-height:22px;color:#000;transform:scaleX(0.9350);">61</span>
<span class="t" style="left:344.57px;top:588.07px;font-size:13.5px;line-height:22px;color:#000;transform:scaleX(0.9350);">2</span>
<span class="t" style="left:357.17px;top:588.07px;font-size:13.5px;line-height:22px;color:#000;transform:scaleX(0.9350);">612</span>
<span class="t" style="left:385.97px;top:588.07px;font-size:13.5px;line-height:22px;color:#000;transform:scaleX(0.9350);">104</span>
<span class="t" style="left:54.74px;top:608.07px;font-size:13.5px;line-height:22px;color:#000;transform:scaleX(1.0326);">Tuesday, November</span>
<span class="t" style="left:182.74px;top:608.07px;font-size:13.5px;line-height:22px;color:#000;transform:scaleX(0.9184);">30, 2021</span>
<span class="t" style="left:253.95px;top:608.07px;font-size:13.5px;line-height:22px;color:#000;transform:scaleX(0.9350);">1559</span>
<span class="t" style="left:311.80px;top:608.07px;font-size:13.5px;line-height:22px;color:#000;transform:scaleX(0.9350);">65</span>
<span class="t" style="left:344.57px;top:608.07px;font-size:13.5px;line-height:22px;color:#000;transform:scaleX(0.9350);">2</span>
<span class="t" style="left:357.17px;top:608.07px;font-size:13.5px;line-height:22px;color:#000;transform:scaleX(0.9350);">652</span>
<span class="t" style="left:389.47px;top:608.07px;font-size:13.5px;line-height:22px;color:#000;transform:scaleX(0.9350);">83</span>
<span class="t" style="left:54.74px;top:628.07px;font-size:13.5px;line-height:22px;color:#000;transform:scaleX(1.0326);">Tuesday, November</span>
<span class="t" style="left:182.74px;top:628.07px;font-size:13.5px;line-height:22px;color:#000;transform:scaleX(0.9184);">30, 2021</span>
<span class="t" style="left:253.95px;top:628.07px;font-size:13.5px;line-height:22px;color:#000;transform:scaleX(0.9350);">8133</span>
<span class="t" style="left:311.80px;top:628.07px;font-size:13.5px;line-height:22px;color:#000;transform:scaleX(0.9350);">67</span>
<span class="t" style="left:344.57px;top:628.07px;font-size:13.5px;line-height:22px;color:#000;transform:scaleX(0.9350);">2</span>
<span class="t" style="left:357.17px;top:628.07px;font-size:13.5px;line-height:22px;color:#000;transform:scaleX(0.9350);">672</span>
<span class="t" style="left:386.43px;top:628.07px;font-size:13.5px;line-height:22px;color:#000;transform:scaleX(0.9350);">115</span>
<span class="t" style="left:35.00px;top:648.07px;font-size:13.5px;line-height:22px;color:#000;transform:scaleX(1.0280);">Wednesday, December</span>
<span class="t" style="left:182.74px;top:648.07px;font-size:13.5px;line-height:22px;color:#000;transform:scaleX(0.9184);">01, 2021</span>
<span class="t" style="left:253.95px;top:648.07px;font-size:13.5px;line-height:22px;color:#000;transform:scaleX(0.9350);">2485</span>
<span class="t" style="left:311.80px;top:648.07px;font-size:13.5px;line-height:22px;color:#000;transform:scaleX(0.9350);">81</span>
<span class="t" style="left:344.57px;top:648.07px;font-size:13.5px;line-height:22px;color:#000;transform:scaleX(0.9350);">2</span>
<span class="t" style="left:357.17px;top:648.07px;font-size:13.5px;line-height:22px;color:#000;transform:scaleX(0.9350);">812</span>
<span class="t" style="left:385.97px;top:648.07px;font-size:13.5px;line-height:22px;color:#000;transform:scaleX(0.9350);">131</span>
<span class="t" style="left:35.00px;top:668.07px;font-size:13.5px;line-height:22px;color:#000;transform:scaleX(1.0280);">Wednesday, December</span>
<span class="t" style="left:182.74px;top:668.07px;font-size:13.5px;line-height:22px;color:#000;transform:scaleX(0.9184);">01, 2021</span>
<span class="t" style="left:253.95px;top:668.07px;font-size:13.5px;line-height:22px;color:#000;transform:scaleX(0.9350);">6807</span>
<span class="t" style="left:311.80px;top:668.07px;font-size:13.5px;line-height:22px;color:#000;transform:scaleX(0.9350);">85</span>
<span class="t" style="left:344.57px;top:668.07px;font-size:13.5px;line-height:22px;color:#000;transform:scaleX(0.9350);">2</span>
<span class="t" style="left:357.17px;top:668.07px;font-size:13.5px;line-height:22px;color:#000;transform:scaleX(0.9350);">852</span>
<span class="t" style="left:389.47px;top:668.07px;font-size:13.5px;line-height:22px;color:#000;transform:scaleX(0.9350);">88</span>
<span class="t" style="left:52.00px;top:688.07px;font-size:13.5px;line-height:22px;color:#000;transform:scaleX(1.0133);">Thursday, December</span>
<span class="t" style="left:182.74px;top:688.07px;font-size:13.5px;line-height:22px;color:#000;transform:scaleX(0.9184);">02, 2021</span>
<span class="t" style="left:253.95px;top:688.07px;font-size:13.5px;line-height:22px;color:#000;transform:scaleX(0.9350);">2879</span>
<span class="t" style="left:311.80px;top:688.07px;font-size:13.5px;line-height:22px;color:#000;transform:scaleX(0.9350);">89</span>
<span class="t" style="left:344.57px;top:688.07px;font-size:13.5px;line-height:22px;color:#000;transform:scaleX(0.9350);">2</span>
<span class="t" style="left:357.17px;top:688.07px;font-size:13.5px;line-height:22px;color:#000;transform:scaleX(0.9350);">892</span>
<span class="t" style="left:385.97px;top:688.07px;font-size:13.5px;line-height:22px;color:#000;transform:scaleX(0.9350);">141</span>
<span class="t" style="left:52.00px;top:708.07px;font-size:13.5px;line-height:22px;color:#000;transform:scaleX(1.0133);">Thursday, December</span>
<span class="t" style="left:182.74px;top:708.07px;font-size:13.5px;line-height:22px;color:#000;transform:scaleX(0.9184);">02, 2021</span>
<span class="t" style="left:253.95px;top:708.07px;font-size:13.5px;line-height:22px;color:#000;transform:scaleX(0.9350);">4685</span>
<span class="t" style="left:311.80px;top:708.07px;font-size:13.5px;line-height:22px;color:#000;transform:scaleX(0.9350);">28</span>
<span class="t" style="left:344.57px;top:708.07px;font-size:13.5px;line-height:22px;color:#000;transform:scaleX(0.9350);">3</span>
<span class="t" style="left:357.17px;top:708.07px;font-size:13.5px;line-height:22px;color:#000;transform:scaleX(0.9350);">283</span>
<span class="t" style="left:389.47px;top:708.07px;font-size:13.5px;line-height:22px;color:#000;transform:scaleX(0.9350);">24</span>
<span class="t" style="left:70.23px;top:728.07px;font-size:13.5px;line-height:22px;color:#000;transform:scaleX(1.0205);">Friday, December</span>
<span class="t" style="left:182.74px;top:728.07px;font-size:13.5px;line-height:22px;color:#000;transform:scaleX(0.9184);">03, 2021</span>
<span class="t" style="left:253.95px;top:728.07px;font-size:13.5px;line-height:22px;color:#000;transform:scaleX(0.9350);">4613</span>
<span class="t" style="left:311.80px;top:728.07px;font-size:13.5px;line-height:22px;color:#000;transform:scaleX(0.9350);">60</span>
<span class="t" style="left:344.57px;top:728.07px;font-size:13.5px;line-height:22px;color:#000;transform:scaleX(0.9350);">3</span>
<span class="t" style="left:357.17px;top:728.07px;font-size:13.5px;line-height:22px;color:#000;transform:scaleX(0.9350);">603</span>
<span class="t" style="left:389.47px;top:728.07px;font-size:13.5px;line-height:22px;color:#000;transform:scaleX(0.9350);">40</span>
<span class="t" style="left:438.17px;top:728.07px;font-size:13.5px;line-height:22px;color:#000;transform:scaleX(0.9350);">287</span>
<span class="t" style="left:464.07px;top:728.07px;font-size:13.5px;line-height:22px;color:#000;transform:scaleX(0.9350);">02</span>
<span class="t" style="left:480.05px;top:728.07px;font-size:13.5px;line-height:22px;color:#000;transform:scaleX(0.9350);">2872</span>
<span class="t" style="left:517.47px;top:728.07px;font-size:13.5px;line-height:22px;color:#000;transform:scaleX(0.9350);">12</span>
<span class="t" style="left:70.23px;top:748.07px;font-size:13.5px;line-height:22px;color:#000;transform:scaleX(1.0205);">Friday, December</span>
<span class="t" style="left:182.74px;top:748.07px;font-size:13.5px;line-height:22px;color:#000;transform:scaleX(0.9184);">03, 2021</span>
<span class="t" style="left:253.95px;top:748.07px;font-size:13.5px;line-height:22px;color:#000;transform:scaleX(0.9350);">6801</span>
<span class="t" style="left:311.80px;top:748.07px;font-size:13.5px;line-height:22px;color:#000;transform:scaleX(0.9350);">68</span>
<span class="t" style="left:344.57px;top:748.07px;font-size:13.5px;line-height:22px;color:#000;transform:scaleX(0.9350);">3</span>
<span class="t" style="left:357.17px;top:748.07px;font-size:13.5px;line-height:22px;color:#000;transform:scaleX(0.9350);">683</span>
<span class="t" style="left:389.47px;top:748.07px;font-size:13.5px;line-height:22px;color:#000;transform:scaleX(0.9350);">39</span>
<span class="t" style="left:438.17px;top:748.07px;font-size:13.5px;line-height:22px;color:#000;transform:scaleX(0.9350);">485</span>
<span class="t" style="left:464.07px;top:748.07px;font-size:13.5px;line-height:22px;color:#000;transform:scaleX(0.9350);">02</span>
<span class="t" style="left:480.05px;top:748.07px;font-size:13.5px;line-height:22px;color:#000;transform:scaleX(0.9350);">4852</span>
<span class="t" style="left:517.47px;top:748.07px;font-size:13.5px;line-height:22px;color:#000;transform:scaleX(0.9350);">23</span>
<span class="t" style="left:53.74px;top:768.07px;font-size:13.5px;line-height:22px;color:#000;transform:scaleX(1.0177);">Saturday, December</span>
<span class="t" style="left:182.74px;top:768.07px;font-size:13.5px;line-height:22px;color:#000;transform:scaleX(0.9184);">04, 2021</span>
<span class="t" style="left:254.43px;top:768.07px;font-size:13.5px;line-height:22px;color:#000;transform:scaleX(0.9350);">4117</span>
<span class="t" style="left:311.80px;top:768.07px;font-size:13.5px;line-height:22px;color:#000;transform:scaleX(0.9350);">80</span>
<span class="t" style="left:344.57px;top:768.07px;font-size:13.5px;line-height:22px;color:#000;transform:scaleX(0.9350);">3</span>
<span class="t" style="left:357.17px;top:768.07px;font-size:13.5px;line-height:22px;color:#000;transform:scaleX(0.9350);">803</span>
<span class="t" style="left:389.47px;top:768.07px;font-size:13.5px;line-height:22px;color:#000;transform:scaleX(0.9350);">53</span>
<span class="t" style="left:438.17px;top:768.07px;font-size:13.5px;line-height:22px;color:#000;transform:scaleX(0.9350);">607</span>
<span class="t" style="left:464.07px;top:768.07px;font-size:13.5px;line-height:22px;color:#000;transform:scaleX(0.9350);">02</span>
<span class="t" style="left:480.05px;top:768.07px;font-size:13.5px;line-height:22px;color:#000;transform:scaleX(0.9350);">6072</span>
<span class="t" style="left:517.47px;top:768.07px;font-size:13.5px;line-height:22px;color:#000;transform:scaleX(0.9350);">10</span>
<span class="t" style="left:53.74px;top:788.07px;font-size:13.5px;line-height:22px;color:#000;transform:scaleX(1.0177);">Saturday, December</span>
<span class="t" style="left:182.74px;top:788.07px;font-size:13.5px;line-height:22px;color:#000;transform:scaleX(0.9184);">04, 2021</span>
<span class="t" style="left:253.95px;top:788.07px;font-size:13.5px;line-height:22px;color:#000;transform:scaleX(0.9350);">6057</span>
<span class="t" style="left:311.80px;top:788.07px;font-size:13.5px;line-height:22px;color:#000;transform:scaleX(0.9350);">87</span>
<span class="t" style="left:344.57px;top:788.07px;font-size:13.5px;line-height:22px;color:#000;transform:scaleX(0.9350);">3</span>
<span class="t" style="left:357.17px;top:788.07px;font-size:13.5px;line-height:22px;color:#000;transform:scaleX(0.9350);">873</span>
<span class="t" style="left:389.47px;top:788.07px;font-size:13.5px;line-height:22px;color:#000;transform:scaleX(0.9350);">35</span>
<span class="t" style="left:438.17px;top:788.07px;font-size:13.5px;line-height:22px;color:#000;transform:scaleX(0.9350);">680</span>
<span class="t" style="left:464.07px;top:788.07px;font-size:13.5px;line-height:22px;color:#000;transform:scaleX(0.9350);">02</span>
<span class="t" style="left:480.05px;top:788.07px;font-size:13.5px;line-height:22px;color:#000;transform:scaleX(0.9350);">6802</span>
<span class="t" style="left:517.47px;top:788.07px;font-size:13.5px;line-height:22px;color:#000;transform:scaleX(0.9350);">24</span>
<span class="t" style="left:24.52px;top:808.07px;font-size:13.5px;line-height:22px;color:#000;transform:scaleX(0.9604);">50W2021</span>
<span class="t" style="left:57.97px;top:828.07px;font-size:13.5px;line-height:22px;color:#000;transform:scaleX(1.0338);">Monday, December</span>
<span class="t" style="left:182.74px;top:828.07px;font-size:13.5px;line-height:22px;color:#000;transform:scaleX(0.9184);">06, 2021</span>
<span class="t" style="left:253.95px;top:828.07px;font-size:13.5px;line-height:22px;color:#000;transform:scaleX(0.9350);">1579</span>
<span class="t" style="left:311.80px;top:828.07px;font-size:13.5px;line-height:22px;color:#000;transform:scaleX(0.9350);">26</span>
<span class="t" style="left:344.57px;top:828.07px;font-size:13.5px;line-height:22px;color:#000;transform:scaleX(0.9350);">2</span>
<span class="t" style="left:357.17px;top:828.07px;font-size:13.5px;line-height:22px;color:#000;transform:scaleX(0.9350);">262</span>
<span class="t" style="left:389.47px;top:828.07px;font-size:13.5px;line-height:22px;color:#000;transform:scaleX(0.9350);">65</span>
<span class="t" style="left:57.97px;top:848.07px;font-size:13.5px;line-height:22px;color:#000;transform:scaleX(1.0338);">Monday, December</span>
<span class="t" style="left:182.74px;top:848.07px;font-size:13.5px;line-height:22px;color:#000;transform:scaleX(0.9184);">06, 2021</span>
<span class="t" style="left:253.95px;top:848.07px;font-size:13.5px;line-height:22px;color:#000;transform:scaleX(0.9350);">4157</span>
<span class="t" style="left:311.80px;top:848.07px;font-size:13.5px;line-height:22px;color:#000;transform:scaleX(0.9350);">28</span>
<span class="t" style="left:344.57px;top:848.07px;font-size:13.5px;line-height:22px;color:#000;transform:scaleX(0.9350);">2</span>
<span class="t" style="left:357.17px;top:848.07px;font-size:13.5px;line-height:22px;color:#000;transform:scaleX(0.9350);">282</span>
<span class="t" style="left:389.47px;top:848.07px;font-size:13.5px;line-height:22px;color:#000;transform:scaleX(0.9350);">82</span>
<span class="t" style="left:56.75px;top:868.07px;font-size:13.5px;line-height:22px;color:#000;transform:scaleX(1.0159);">Tuesday, December</span>
<span class="t" style="left:182.74px;top:868.07px;font-size:13.5px;line-height:22px;color:#000;transform:scaleX(0.9184);">07, 2021</span>
<span class="t" style="left:253.95px;top:868.07px;font-size:13.5px;line-height:22px;color:#000;transform:scaleX(0.9350);">6557</span>
<span class="t" style="left:311.80px;top:868.07px;font-size:13.5px;line-height:22px;color:#000;transform:scaleX(0.9350);">63</span>
<span class="t" style="left:344.57px;top:868.07px;font-size:13.5px;line-height:22px;color:#000;transform:scaleX(0.9350);">2</span>
<span class="t" style="left:357.17px;top:868.07px;font-size:13.5px;line-height:22px;color:#000;transform:scaleX(0.9350);">632</span>
<span class="t" style="left:385.97px;top:868.07px;font-size:13.5px;line-height:22px;color:#000;transform:scaleX(0.9350);">108</span>
<span class="t" style="left:56.75px;top:888.07px;font-size:13.5px;line-height:22px;color:#000;transform:scaleX(1.0159);">Tuesday, December</span>
<span class="t" style="left:182.74px;top:888.07px;font-size:13.5px;line-height:22px;color:#000;transform:scaleX(0.9184);">07, 2021</span>
<span class="t" style="left:253.95px;top:888.07px;font-size:13.5px;line-height:22px;color:#000;transform:scaleX(0.9350);">2685</span>
<span class="t" style="left:311.80px;top:888.07px;font-size:13.5px;line-height:22px;color:#000;transform:scaleX(0.9350);">65</span>
<span class="t" style="left:344.57px;top:888.07px;font-size:13.5px;line-height:22px;color:#000;transform:scaleX(0.9350);">2</span>
<span class="t" style="left:357.17px;top:888.07px;font-size:13.5px;line-height:22px;color:#000;transform:scaleX(0.9350);">652</span>
<span class="t" style="left:389.47px;top:888.07px;font-size:13.5px;line-height:22px;color:#000;transform:scaleX(0.9350);">83</span>
<span class="t" style="left:35.00px;top:908.07px;font-size:13.5px;line-height:22px;color:#000;transform:scaleX(1.0280);">Wednesday, December</span>
<span class="t" style="left:182.74px;top:908.07px;font-size:13.5px;line-height:22px;color:#000;transform:scaleX(0.9184);">08, 2021</span>
<span class="t" style="left:253.95px;top:908.07px;font-size:13.5px;line-height:22px;color:#000;transform:scaleX(0.9350);">8779</span>
<span class="t" style="left:311.80px;top:908.07px;font-size:13.5px;line-height:22px;color:#000;transform:scaleX(0.9350);">68</span>
<span class="t" style="left:344.57px;top:908.07px;font-size:13.5px;line-height:22px;color:#000;transform:scaleX(0.9350);">2</span>
<span class="t" style="left:357.17px;top:908.07px;font-size:13.5px;line-height:22px;color:#000;transform:scaleX(0.9350);">682</span>
<span class="t" style="left:385.97px;top:908.07px;font-size:13.5px;line-height:22px;color:#000;transform:scaleX(0.9350);">102</span>
<span class="t" style="left:35.00px;top:928.07px;font-size:13.5px;line-height:22px;color:#000;transform:scaleX(1.0280);">Wednesday, December</span>
<span class="t" style="left:182.74px;top:928.07px;font-size:13.5px;line-height:22px;color:#000;transform:scaleX(0.9184);">08, 2021</span>
<span class="t" style="left:253.95px;top:928.07px;font-size:13.5px;line-height:22px;color:#000;transform:scaleX(0.9350);">6889</span>
<span class="t" style="left:311.80px;top:928.07px;font-size:13.5px;line-height:22px;color:#000;transform:scaleX(0.9350);">79</span>
<span class="t" style="left:344.57px;top:928.07px;font-size:13.5px;line-height:22px;color:#000;transform:scaleX(0.9350);">2</span>
<span class="t" style="left:357.17px;top:928.07px;font-size:13.5px;line-height:22px;color:#000;transform:scaleX(0.9350);">792</span>
<span class="t" style="left:389.47px;top:928.07px;font-size:13.5px;line-height:22px;color:#000;transform:scaleX(0.9350);">91</span>
<span class="t" style="left:52.00px;top:948.07px;font-size:13.5px;line-height:22px;color:#000;transform:scaleX(1.0133);">Thursday, December</span>
<span class="t" style="left:182.74px;top:948.07px;font-size:13.5px;line-height:22px;color:#000;transform:scaleX(0.9184);">09, 2021</span>
<span class="t" style="left:253.95px;top:948.07px;font-size:13.5px;line-height:22px;color:#000;transform:scaleX(0.9350);">2245</span>
<span class="t" style="left:311.80px;top:948.07px;font-size:13.5px;line-height:22px;color:#000;transform:scaleX(0.9350);">85</span>
<span class="t" style="left:344.57px;top:948.07px;font-size:13.5px;line-height:22px;color:#000;transform:scaleX(0.9350);">2</span>
<span class="t" style="left:357.17px;top:948.07px;font-size:13.5px;line-height:22px;color:#000;transform:scaleX(0.9350);">852</span>
<span class="t" style="left:389.47px;top:948.07px;font-size:13.5px;line-height:22px;color:#000;transform:scaleX(0.9350);">88</span>
<span class="t" style="left:52.00px;top:968.07px;font-size:13.5px;line-height:22px;color:#000;transform:scaleX(1.0133);">Thursday, December</span>
<span class="t" style="left:182.74px;top:968.07px;font-size:13.5px;line-height:22px;color:#000;transform:scaleX(0.9184);">09, 2021</span>
<span class="t" style="left:253.95px;top:968.07px;font-size:13.5px;line-height:22px;color:#000;transform:scaleX(0.9350);">2857</span>
<span class="t" style="left:311.80px;top:968.07px;font-size:13.5px;line-height:22px;color:#000;transform:scaleX(0.9350);">87</span>
<span class="t" style="left:344.57px;top:968.07px;font-size:13.5px;line-height:22px;color:#000;transform:scaleX(0.9350);">2</span>
<span class="t" style="left:357.17px;top:968.07px;font-size:13.5px;line-height:22px;color:#000;transform:scaleX(0.9350);">872</span>
<span class="t" style="left:385.97px;top:968.07px;font-size:13.5px;line-height:22px;color:#000;transform:scaleX(0.9350);">107</span>
<span class="t" style="left:995.72px;top:228.27px;font-size:13.5px;line-height:22px;color:#000;transform:scaleX(0.8812);">BASE</span>
<span class="t" style="left:1110.77px;top:228.27px;font-size:13.5px;line-height:22px;color:#000;transform:scaleX(0.9136);">TRI</span>
<span class="t" style="left:1201.78px;top:228.27px;font-size:13.5px;line-height:22px;color:#000;transform:scaleX(0.9651);">2D</span>
<span class="t" style="left:1230.44px;top:228.27px;font-size:13.5px;line-height:22px;color:#000;transform:scaleX(1.0582);">Relative</span>
<span class="t" style="left:1297.77px;top:228.27px;font-size:13.5px;line-height:22px;color:#000;transform:scaleX(0.9714);">2D</span>
<span class="t" style="left:1326.44px;top:228.27px;font-size:13.5px;line-height:22px;color:#000;transform:scaleX(1.0582);">Relative</span>
<span class="t" style="left:1219.65px;top:169.77px;font-size:13.5px;line-height:22px;color:#000;transform:scaleX(0.8494);">LEFT 3</span>
<span class="t" style="left:1310.67px;top:169.77px;font-size:13.5px;line-height:22px;color:#000;transform:scaleX(0.8350);">RIGHT 3</span>
<svg class="r" style="left:0;top:0" width="1345" height="1026" shape-rendering="crispEdges"><rect x="553" y="130" width="2" height="860" fill="#fff"/><rect x="738" y="130" width="2" height="860" fill="#fff"/><rect x="943" y="130" width="2" height="860" fill="#fff"/><rect x="1285" y="130" width="2" height="860" fill="#fff"/><rect x="553" y="130" width="2" height="1" fill="#ff0d0d"/><rect x="553" y="134" width="2" height="9" fill="#ff0d0d"/><rect x="553" y="146" width="2" height="3" fill="#ff0d0d"/><rect x="553" y="152" width="2" height="3" fill="#ff0d0d"/><rect x="553" y="158" width="2" height="9" fill="#ff0d0d"/><rect x="553" y="170" width="2" height="3" fill="#ff0d0d"/><rect x="553" y="176" width="2" height="3" fill="#ff0d0d"/><rect x="553" y="182" width="2" height="9" fill="#ff0d0d"/><rect x="553" y="194" width="2" height="3" fill="#ff0d0d"/><rect x="553" y="200" width="2" height="3" fill="#ff0d0d"/><rect x="553" y="206" width="2" height="9" fill="#ff0d0d"/><rect x="553" y="218" width="2" height="3" fill="#ff0d0d"/><rect x="553" y="224" width="2" height="3" fill="#ff0d0d"/><rect x="553" y="230" width="2" height="9" fill="#ff0d0d"/><rect x="553" y="242" width="2" height="3" fill="#ff0d0d"/><rect x="553" y="248" width="2" height="3" fill="#ff0d0d"/><rect x="553" y="254" width="2" height="9" fill="#ff0d0d"/><rect x="553" y="266" width="2" height="3" fill="#ff0d0d"/><rect x="553" y="272" width="2" height="3" fill="#ff0d0d"/><rect x="553" y="278" width="2" height="9" fill="#ff0d0d"/><rect x="553" y="290" width="2" height="3" fill="#ff0d0d"/><rect x="553" y="296" width="2" height="3" fill="#ff0d0d"/><rect x="553" y="302" width="2" height="9" fill="#ff0d0d"/><rect x="553" y="314" width="2" height="3" fill="#ff0d0d"/><rect x="553" y="320" width="2" height="3" fill="#ff0d0d"/><rect x="553" y="326" width="2" height="9" fill="#ff0d0d"/><rect x="553" y="338" width="2" height="3" fill="#ff0d0d"/><rect x="553" y="344" width="2" height="3" fill="#ff0d0d"/><rect x="553" y="350" width="2" height="9" fill="#ff0d0d"/><rect x="553" y="362" width="2" height="3" fill="#ff0d0d"/><rect x="553" y="368" width="2" height="3" fill="#ff0d0d"/><rect x="553" y="374" width="2" height="9" fill="#ff0d0d"/><rect x="553" y="386" width="2" height="3" fill="#ff0d0d"/><rect x="553" y="392" width="2" height="3" fill="#ff0d0d"/><rect x="553" y="398" width="2" height="9" fill="#ff0d0d"/><rect x="553" y="410" width="2" height="3" fill="#ff0d0d"/><rect x="553" y="416" width="2" height="3" fill="#ff0d0d"/><rect x="553" y="422" width="2" height="9" fill="#ff0d0d"/><rect x="553" y="434" width="2" height="3" fill="#ff0d0d"/><rect x="553" y="440" width="2" height="3" fill="#ff0d0d"/><rect x="553" y="446" width="2" height="9" fill="#ff0d0d"/><rect x="553" y="458" width="2" height="3" fill="#ff0d0d"/><rect x="553" y="464" width="2" height="3" fill="#ff0d0d"/><rect x="553" y="470" width="2" height="9" fill="#ff0d0d"/><rect x="553" y="482" width="2" height="3" fill="#ff0d0d"/><rect x="553" y="488" width="2" height="3" fill="#ff0d0d"/><rect x="553" y="494" width="2" height="9" fill="#ff0d0d"/><rect x="553" y="506" width="2" height="3" fill="#ff0d0d"/><rect x="553" y="512" width="2" height="3" fill="#ff0d0d"/><rect x="553" y="518" width="2" height="9" fill="#ff0d0d"/><rect x="553" y="530" width="2" height="3" fill="#ff0d0d"/><rect x="553" y="536" width="2" height="3" fill="#ff0d0d"/><rect x="553" y="542" width="2" height="9" fill="#ff0d0d"/><rect x="553" y="554" width="2" height="3" fill="#ff0d0d"/><rect x="553" y="560" width="2" height="3" fill="#ff0d0d"/><rect x="553" y="566" width="2" height="9" fill="#ff0d0d"/><rect x="553" y="578" width="2" height="3" fill="#ff0d0d"/><rect x="553" y="584" width="2" height="3" fill="#ff0d0d"/><rect x="553" y="590" width="2" height="9" fill="#ff0d0d"/><rect x="553" y="602" width="2" height="3" fill="#ff0d0d"/><rect x="553" y="608" width="2" height="3" fill="#ff0d0d"/><rect x="553" y="614" width="2" height="9" fill="#ff0d0d"/><rect x="553" y="626" width="2" height="3" fill="#ff0d0d"/><rect x="553" y="632" width="2" height="3" fill="#ff0d0d"/><rect x="553" y="638" width="2" height="9" fill="#ff0d0d"/><rect x="553" y="650" width="2" height="3" fill="#ff0d0d"/><rect x="553" y="656" width="2" height="3" fill="#ff0d0d"/><rect x="553" y="662" width="2" height="9" fill="#ff0d0d"/><rect x="553" y="674" width="2" height="3" fill="#ff0d0d"/><rect x="553" y="680" width="2" height="3" fill="#ff0d0d"/><rect x="553" y="686" width="2" height="9" fill="#ff0d0d"/><rect x="553" y="698" width="2" height="3" fill="#ff0d0d"/><rect x="553" y="704" width="2" height="3" fill="#ff0d0d"/><rect x="553" y="710" width="2" height="9" fill="#ff0d0d"/><rect x="553" y="722" width="2" height="3" fill="#ff0d0d"/><rect x="553" y="728" width="2" height="3" fill="#ff0d0d"/><rect x="553" y="734" width="2" height="9" fill="#ff0d0d"/><rect x="553" y="746" width="2" height="3" fill="#ff0d0d"/><rect x="553" y="752" width="2" height="3" fill="#ff0d0d"/><rect x="553" y="758" width="2" height="9" fill="#ff0d0d"/><rect x="553" y="770" width="2" height="3" fill="#ff0d0d"/><rect x="553" y="776" width="2" height="3" fill="#ff0d0d"/><rect x="553" y="782" width="2" height="9" fill="#ff0d0d"/><rect x="553" y="794" width="2" height="3" fill="#ff0d0d"/><rect x="553" y="800" width="2" height="3" fill="#ff0d0d"/><rect x="553" y="806" width="2" height="9" fill="#ff0d0d"/><rect x="553" y="818" width="2" height="3" fill="#ff0d0d"/><rect x="553" y="824" width="2" height="3" fill="#ff0d0d"/><rect x="553" y="830" width="2" height="9" fill="#ff0d0d"/><rect x="553" y="842" width="2" height="3" fill="#ff0d0d"/><rect x="553" y="848" width="2" height="3" fill="#ff0d0d"/><rect x="553" y="854" width="2" height="9" fill="#ff0d0d"/><rect x="553" y="866" width="2" height="3" fill="#ff0d0d"/><rect x="553" y="872" width="2" height="3" fill="#ff0d0d"/><rect x="553" y="878" width="2" height="9" fill="#ff0d0d"/><rect x="553" y="890" width="2" height="3" fill="#ff0d0d"/><rect x="553" y="896" width="2" height="3" fill="#ff0d0d"/><rect x="553" y="902" width="2" height="9" fill="#ff0d0d"/><rect x="553" y="914" width="2" height="3" fill="#ff0d0d"/><rect x="553" y="920" width="2" height="3" fill="#ff0d0d"/><rect x="553" y="926" width="2" height="9" fill="#ff0d0d"/><rect x="553" y="938" width="2" height="3" fill="#ff0d0d"/><rect x="553" y="944" width="2" height="3" fill="#ff0d0d"/><rect x="553" y="950" width="2" height="9" fill="#ff0d0d"/><rect x="553" y="962" width="2" height="3" fill="#ff0d0d"/><rect x="553" y="968" width="2" height="3" fill="#ff0d0d"/><rect x="553" y="974" width="2" height="9" fill="#ff0d0d"/><rect x="553" y="986" width="2" height="3" fill="#ff0d0d"/><rect x="553" y="134" width="1" height="33" fill="#ff0d0d"/><rect x="738" y="130" width="2" height="7" fill="#ff0d0d"/><rect x="738" y="140" width="2" height="3" fill="#ff0d0d"/><rect x="738" y="146" width="2" height="9" fill="#ff0d0d"/><rect x="738" y="158" width="2" height="3" fill="#ff0d0d"/><rect x="738" y="164" width="2" height="9" fill="#ff0d0d"/><rect x="738" y="176" width="2" height="3" fill="#ff0d0d"/><rect x="738" y="182" width="2" height="9" fill="#ff0d0d"/><rect x="738" y="194" width="2" height="3" fill="#ff0d0d"/><rect x="738" y="200" width="2" height="9" fill="#ff0d0d"/><rect x="738" y="212" width="2" height="3" fill="#ff0d0d"/><rect x="738" y="218" width="2" height="9" fill="#ff0d0d"/><rect x="738" y="230" width="2" height="3" fill="#ff0d0d"/><rect x="738" y="236" width="2" height="9" fill="#ff0d0d"/><rect x="738" y="248" width="2" height="3" fill="#ff0d0d"/><rect x="738" y="254" width="2" height="9" fill="#ff0d0d"/><rect x="738" y="266" width="2" height="3" fill="#ff0d0d"/><rect x="738" y="272" width="2" height="9" fill="#ff0d0d"/><rect x="738" y="284" width="2" height="3" fill="#ff0d0d"/><rect x="738" y="290" width="2" height="9" fill="#ff0d0d"/><rect x="738" y="302" width="2" height="3" fill="#ff0d0d"/><rect x="738" y="308" width="2" height="9" fill="#ff0d0d"/><rect x="738" y="320" width="2" height="3" fill="#ff0d0d"/><rect x="738" y="326" width="2" height="9" fill="#ff0d0d"/><rect x="738" y="338" width="2" height="3" fill="#ff0d0d"/><rect x="738" y="344" width="2" height="9" fill="#ff0d0d"/><rect x="738" y="356" width="2" height="3" fill="#ff0d0d"/><rect x="738" y="362" width="2" height="9" fill="#ff0d0d"/><rect x="738" y="374" width="2" height="3" fill="#ff0d0d"/><rect x="738" y="380" width="2" height="9" fill="#ff0d0d"/><rect x="738" y="392" width="2" height="3" fill="#ff0d0d"/><rect x="738" y="398" width="2" height="9" fill="#ff0d0d"/><rect x="738" y="410" width="2" height="3" fill="#ff0d0d"/><rect x="738" y="416" width="2" height="9" fill="#ff0d0d"/><rect x="738" y="428" width="2" height="3" fill="#ff0d0d"/><rect x="738" y="434" width="2" height="9" fill="#ff0d0d"/><rect x="738" y="446" width="2" height="3" fill="#ff0d0d"/><rect x="738" y="452" width="2" height="9" fill="#ff0d0d"/><rect x="738" y="464" width="2" height="3" fill="#ff0d0d"/><rect x="738" y="470" width="2" height="9" fill="#ff0d0d"/><rect x="738" y="482" width="2" height="3" fill="#ff0d0d"/><rect x="738" y="488" width="2" height="9" fill="#ff0d0d"/><rect x="738" y="500" width="2" height="3" fill="#ff0d0d"/><rect x="738" y="506" width="2" height="9" fill="#ff0d0d"/><rect x="738" y="518" width="2" height="3" fill="#ff0d0d"/><rect x="738" y="524" width="2" height="9" fill="#ff0d0d"/><rect x="738" y="536" width="2" height="3" fill="#ff0d0d"/><rect x="738" y="542" width="2" height="9" fill="#ff0d0d"/><rect x="738" y="554" width="2" height="3" fill="#ff0d0d"/><rect x="738" y="560" width="2" height="9" fill="#ff0d0d"/><rect x="738" y="572" width="2" height="3" fill="#ff0d0d"/><rect x="738" y="578" width="2" height="9" fill="#ff0d0d"/><rect x="738" y="590" width="2" height="3" fill="#ff0d0d"/><rect x="738" y="596" width="2" height="9" fill="#ff0d0d"/><rect x="738" y="608" width="2" height="3" fill="#ff0d0d"/><rect x="738" y="614" width="2" height="9" fill="#ff0d0d"/><rect x="738" y="626" width="2" height="3" fill="#ff0d0d"/><rect x="738" y="632" width="2" height="9" fill="#ff0d0d"/><rect x="738" y="644" width="2" height="3" fill="#ff0d0d"/><rect x="738" y="650" width="2" height="9" fill="#ff0d0d"/><rect x="738" y="662" width="2" height="3" fill="#ff0d0d"/><rect x="738" y="668" width="2" height="9" fill="#ff0d0d"/><rect x="738" y="680" width="2" height="3" fill="#ff0d0d"/><rect x="738" y="686" width="2" height="9" fill="#ff0d0d"/><rect x="738" y="698" width="2" height="3" fill="#ff0d0d"/><rect x="738" y="704" width="2" height="9" fill="#ff0d0d"/><rect x="738" y="716" width="2" height="3" fill="#ff0d0d"/><rect x="738" y="722" width="2" height="9" fill="#ff0d0d"/><rect x="738" y="734" width="2" height="3" fill="#ff0d0d"/><rect x="738" y="740" width="2" height="9" fill="#ff0d0d"/><rect x="738" y="752" width="2" height="3" fill="#ff0d0d"/><rect x="738" y="758" width="2" height="9" fill="#ff0d0d"/><rect x="738" y="770" width="2" height="3" fill="#ff0d0d"/><rect x="738" y="776" width="2" height="9" fill="#ff0d0d"/><rect x="738" y="788" width="2" height="3" fill="#ff0d0d"/><rect x="738" y="794" width="2" height="9" fill="#ff0d0d"/><rect x="738" y="806" width="2" height="3" fill="#ff0d0d"/><rect x="738" y="812" width="2" height="9" fill="#ff0d0d"/><rect x="738" y="824" width="2" height="3" fill="#ff0d0d"/><rect x="738" y="830" width="2" height="9" fill="#ff0d0d"/><rect x="738" y="842" width="2" height="3" fill="#ff0d0d"/><rect x="738" y="848" width="2" height="9" fill="#ff0d0d"/><rect x="738" y="860" width="2" height="3" fill="#ff0d0d"/><rect x="738" y="866" width="2" height="9" fill="#ff0d0d"/><rect x="738" y="878" width="2" height="3" fill="#ff0d0d"/><rect x="738" y="884" width="2" height="9" fill="#ff0d0d"/><rect x="738" y="896" width="2" height="3" fill="#ff0d0d"/><rect x="738" y="902" width="2" height="9" fill="#ff0d0d"/><rect x="738" y="914" width="2" height="3" fill="#ff0d0d"/><rect x="738" y="920" width="2" height="9" fill="#ff0d0d"/><rect x="738" y="932" width="2" height="3" fill="#ff0d0d"/><rect x="738" y="938" width="2" height="9" fill="#ff0d0d"/><rect x="738" y="950" width="2" height="3" fill="#ff0d0d"/><rect x="738" y="956" width="2" height="9" fill="#ff0d0d"/><rect x="738" y="968" width="2" height="3" fill="#ff0d0d"/><rect x="738" y="974" width="2" height="9" fill="#ff0d0d"/><rect x="738" y="986" width="2" height="3" fill="#ff0d0d"/><rect x="943" y="130" width="2" height="7" fill="#ff0d0d"/><rect x="943" y="140" width="2" height="3" fill="#ff0d0d"/><rect x="943" y="146" width="2" height="9" fill="#ff0d0d"/><rect x="943" y="158" width="2" height="3" fill="#ff0d0d"/><rect x="943" y="164" width="2" height="9" fill="#ff0d0d"/><rect x="943" y="176" width="2" height="3" fill="#ff0d0d"/><rect x="943" y="182" width="2" height="9" fill="#ff0d0d"/><rect x="943" y="194" width="2" height="3" fill="#ff0d0d"/><rect x="943" y="200" width="2" height="9" fill="#ff0d0d"/><rect x="943" y="212" width="2" height="3" fill="#ff0d0d"/><rect x="943" y="218" width="2" height="9" fill="#ff0d0d"/><rect x="943" y="230" width="2" height="3" fill="#ff0d0d"/><rect x="943" y="236" width="2" height="9" fill="#ff0d0d"/><rect x="943" y="248" width="2" height="3" fill="#ff0d0d"/><rect x="943" y="254" width="2" height="9" fill="#ff0d0d"/><rect x="943" y="266" width="2" height="3" fill="#ff0d0d"/><rect x="943" y="272" width="2" height="9" fill="#ff0d0d"/><rect x="943" y="284" width="2" height="3" fill="#ff0d0d"/><rect x="943" y="290" width="2" height="9" fill="#ff0d0d"/><rect x="943" y="302" width="2" height="3" fill="#ff0d0d"/><rect x="943" y="308" width="2" height="9" fill="#ff0d0d"/><rect x="943" y="320" width="2" height="3" fill="#ff0d0d"/><rect x="943" y="326" width="2" height="9" fill="#ff0d0d"/><rect x="943" y="338" width="2" height="3" fill="#ff0d0d"/><rect x="943" y="344" width="2" height="9" fill="#ff0d0d"/><rect x="943" y="356" width="2" height="3" fill="#ff0d0d"/><rect x="943" y="362" width="2" height="9" fill="#ff0d0d"/><rect x="943" y="374" width="2" height="3" fill="#ff0d0d"/><rect x="943" y="380" width="2" height="9" fill="#ff0d0d"/><rect x="943" y="392" width="2" height="3" fill="#ff0d0d"/><rect x="943" y="398" width="2" height="9" fill="#ff0d0d"/><rect x="943" y="410" width="2" height="3" fill="#ff0d0d"/><rect x="943" y="416" width="2" height="9" fill="#ff0d0d"/><rect x="943" y="428" width="2" height="3" fill="#ff0d0d"/><rect x="943" y="434" width="2" height="9" fill="#ff0d0d"/><rect x="943" y="446" width="2" height="3" fill="#ff0d0d"/><rect x="943" y="452" width="2" height="9" fill="#ff0d0d"/><rect x="943" y="464" width="2" height="3" fill="#ff0d0d"/><rect x="943" y="470" width="2" height="9" fill="#ff0d0d"/><rect x="943" y="482" width="2" height="3" fill="#ff0d0d"/><rect x="943" y="488" width="2" height="9" fill="#ff0d0d"/><rect x="943" y="500" width="2" height="3" fill="#ff0d0d"/><rect x="943" y="506" width="2" height="9" fill="#ff0d0d"/><rect x="943" y="518" width="2" height="3" fill="#ff0d0d"/><rect x="943" y="524" width="2" height="9" fill="#ff0d0d"/><rect x="943" y="536" width="2" height="3" fill="#ff0d0d"/><rect x="943" y="542" width="2" height="9" fill="#ff0d0d"/><rect x="943" y="554" width="2" height="3" fill="#ff0d0d"/><rect x="943" y="560" width="2" height="9" fill="#ff0d0d"/><rect x="943" y="572" width="2" height="3" fill="#ff0d0d"/><rect x="943" y="578" width="2" height="9" fill="#ff0d0d"/><rect x="943" y="590" width="2" height="3" fill="#ff0d0d"/><rect x="943" y="596" width="2" height="9" fill="#ff0d0d"/><rect x="943" y="608" width="2" height="3" fill="#ff0d0d"/><rect x="943" y="614" width="2" height="9" fill="#ff0d0d"/><rect x="943" y="626" width="2" height="3" fill="#ff0d0d"/><rect x="943" y="632" width="2" height="9" fill="#ff0d0d"/><rect x="943" y="644" width="2" height="3" fill="#ff0d0d"/><rect x="943" y="650" width="2" height="9" fill="#ff0d0d"/><rect x="943" y="662" width="2" height="3" fill="#ff0d0d"/><rect x="943" y="668" width="2" height="9" fill="#ff0d0d"/><rect x="943" y="680" width="2" height="3" fill="#ff0d0d"/><rect x="943" y="686" width="2" height="9" fill="#ff0d0d"/><rect x="943" y="698" width="2" height="3" fill="#ff0d0d"/><rect x="943" y="704" width="2" height="9" fill="#ff0d0d"/><rect x="943" y="716" width="2" height="3" fill="#ff0d0d"/><rect x="943" y="722" width="2" height="9" fill="#ff0d0d"/><rect x="943" y="734" width="2" height="3" fill="#ff0d0d"/><rect x="943" y="740" width="2" height="9" fill="#ff0d0d"/><rect x="943" y="752" width="2" height="3" fill="#ff0d0d"/><rect x="943" y="758" width="2" height="9" fill="#ff0d0d"/><rect x="943" y="770" width="2" height="3" fill="#ff0d0d"/><rect x="943" y="776" width="2" height="9" fill="#ff0d0d"/><rect x="943" y="788" width="2" height="3" fill="#ff0d0d"/><rect x="943" y="794" width="2" height="9" fill="#ff0d0d"/><rect x="943" y="806" width="2" height="3" fill="#ff0d0d"/><rect x="943" y="812" width="2" height="9" fill="#ff0d0d"/><rect x="943" y="824" width="2" height="3" fill="#ff0d0d"/><rect x="943" y="830" width="2" height="9" fill="#ff0d0d"/><rect x="943" y="842" width="2" height="3" fill="#ff0d0d"/><rect x="943" y="848" width="2" height="9" fill="#ff0d0d"/><rect x="943" y="860" width="2" height="3" fill="#ff0d0d"/><rect x="943" y="866" width="2" height="9" fill="#ff0d0d"/><rect x="943" y="878" width="2" height="3" fill="#ff0d0d"/><rect x="943" y="884" width="2" height="9" fill="#ff0d0d"/><rect x="943" y="896" width="2" height="3" fill="#ff0d0d"/><rect x="943" y="902" width="2" height="9" fill="#ff0d0d"/><rect x="943" y="914" width="2" height="3" fill="#ff0d0d"/><rect x="943" y="920" width="2" height="9" fill="#ff0d0d"/><rect x="943" y="932" width="2" height="3" fill="#ff0d0d"/><rect x="943" y="938" width="2" height="9" fill="#ff0d0d"/><rect x="943" y="950" width="2" height="3" fill="#ff0d0d"/><rect x="943" y="956" width="2" height="9" fill="#ff0d0d"/><rect x="943" y="968" width="2" height="3" fill="#ff0d0d"/><rect x="943" y="974" width="2" height="9" fill="#ff0d0d"/><rect x="943" y="986" width="2" height="3" fill="#ff0d0d"/><rect x="1067" y="190" width="1" height="1" fill="#ff0d0d"/><rect x="1067" y="194" width="1" height="3" fill="#ff0d0d"/><rect x="1067" y="200" width="1" height="9" fill="#ff0d0d"/><rect x="1067" y="212" width="1" height="3" fill="#ff0d0d"/><rect x="1067" y="218" width="1" height="9" fill="#ff0d0d"/><rect x="1067" y="230" width="1" height="3" fill="#ff0d0d"/><rect x="1067" y="236" width="1" height="9" fill="#ff0d0d"/><rect x="1067" y="248" width="1" height="3" fill="#ff0d0d"/><rect x="1067" y="254" width="1" height="9" fill="#ff0d0d"/><rect x="1067" y="266" width="1" height="3" fill="#ff0d0d"/><rect x="1067" y="272" width="1" height="9" fill="#ff0d0d"/><rect x="1067" y="284" width="1" height="3" fill="#ff0d0d"/><rect x="1067" y="290" width="1" height="9" fill="#ff0d0d"/><rect x="1067" y="302" width="1" height="3" fill="#ff0d0d"/><rect x="1067" y="308" width="1" height="9" fill="#ff0d0d"/><rect x="1067" y="320" width="1" height="3" fill="#ff0d0d"/><rect x="1067" y="326" width="1" height="9" fill="#ff0d0d"/><rect x="1067" y="338" width="1" height="3" fill="#ff0d0d"/><rect x="1067" y="344" width="1" height="9" fill="#ff0d0d"/><rect x="1067" y="356" width="1" height="3" fill="#ff0d0d"/><rect x="1067" y="362" width="1" height="9" fill="#ff0d0d"/><rect x="1067" y="374" width="1" height="3" fill="#ff0d0d"/><rect x="1067" y="380" width="1" height="9" fill="#ff0d0d"/><rect x="1067" y="392" width="1" height="3" fill="#ff0d0d"/><rect x="1067" y="398" width="1" height="9" fill="#ff0d0d"/><rect x="1067" y="410" width="1" height="3" fill="#ff0d0d"/><rect x="1067" y="416" width="1" height="9" fill="#ff0d0d"/><rect x="1067" y="428" width="1" height="3" fill="#ff0d0d"/><rect x="1067" y="434" width="1" height="9" fill="#ff0d0d"/><rect x="1067" y="446" width="1" height="3" fill="#ff0d0d"/><rect x="1067" y="452" width="1" height="9" fill="#ff0d0d"/><rect x="1067" y="464" width="1" height="3" fill="#ff0d0d"/><rect x="1067" y="470" width="1" height="9" fill="#ff0d0d"/><rect x="1067" y="482" width="1" height="3" fill="#ff0d0d"/><rect x="1067" y="488" width="1" height="9" fill="#ff0d0d"/><rect x="1067" y="500" width="1" height="3" fill="#ff0d0d"/><rect x="1067" y="506" width="1" height="9" fill="#ff0d0d"/><rect x="1067" y="518" width="1" height="3" fill="#ff0d0d"/><rect x="1067" y="524" width="1" height="9" fill="#ff0d0d"/><rect x="1067" y="536" width="1" height="3" fill="#ff0d0d"/><rect x="1067" y="542" width="1" height="9" fill="#ff0d0d"/><rect x="1067" y="554" width="1" height="3" fill="#ff0d0d"/><rect x="1067" y="560" width="1" height="9" fill="#ff0d0d"/><rect x="1067" y="572" width="1" height="3" fill="#ff0d0d"/><rect x="1067" y="578" width="1" height="9" fill="#ff0d0d"/><rect x="1067" y="590" width="1" height="3" fill="#ff0d0d"/><rect x="1067" y="596" width="1" height="9" fill="#ff0d0d"/><rect x="1067" y="608" width="1" height="3" fill="#ff0d0d"/><rect x="1067" y="614" width="1" height="9" fill="#ff0d0d"/><rect x="1067" y="626" width="1" height="3" fill="#ff0d0d"/><rect x="1067" y="632" width="1" height="9" fill="#ff0d0d"/><rect x="1067" y="644" width="1" height="3" fill="#ff0d0d"/><rect x="1067" y="650" width="1" height="9" fill="#ff0d0d"/><rect x="1067" y="662" width="1" height="3" fill="#ff0d0d"/><rect x="1067" y="668" width="1" height="9" fill="#ff0d0d"/><rect x="1067" y="680" width="1" height="3" fill="#ff0d0d"/><rect x="1067" y="686" width="1" height="9" fill="#ff0d0d"/><rect x="1067" y="698" width="1" height="3" fill="#ff0d0d"/><rect x="1067" y="704" width="1" height="9" fill="#ff0d0d"/><rect x="1067" y="716" width="1" height="3" fill="#ff0d0d"/><rect x="1067" y="722" width="1" height="9" fill="#ff0d0d"/><rect x="1067" y="734" width="1" height="3" fill="#ff0d0d"/><rect x="1067" y="740" width="1" height="9" fill="#ff0d0d"/><rect x="1067" y="752" width="1" height="3" fill="#ff0d0d"/><rect x="1067" y="758" width="1" height="9" fill="#ff0d0d"/><rect x="1067" y="770" width="1" height="3" fill="#ff0d0d"/><rect x="1067" y="776" width="1" height="9" fill="#ff0d0d"/><rect x="1067" y="788" width="1" height="3" fill="#ff0d0d"/><rect x="1067" y="794" width="1" height="9" fill="#ff0d0d"/><rect x="1067" y="806" width="1" height="3" fill="#ff0d0d"/><rect x="1067" y="812" width="1" height="9" fill="#ff0d0d"/><rect x="1067" y="824" width="1" height="3" fill="#ff0d0d"/><rect x="1067" y="830" width="1" height="9" fill="#ff0d0d"/><rect x="1067" y="842" width="1" height="3" fill="#ff0d0d"/><rect x="1067" y="848" width="1" height="9" fill="#ff0d0d"/><rect x="1067" y="860" width="1" height="3" fill="#ff0d0d"/><rect x="1067" y="866" width="1" height="9" fill="#ff0d0d"/><rect x="1067" y="878" width="1" height="3" fill="#ff0d0d"/><rect x="1067" y="884" width="1" height="9" fill="#ff0d0d"/><rect x="1067" y="896" width="1" height="3" fill="#ff0d0d"/><rect x="1067" y="902" width="1" height="9" fill="#ff0d0d"/><rect x="1067" y="914" width="1" height="3" fill="#ff0d0d"/><rect x="1067" y="920" width="1" height="9" fill="#ff0d0d"/><rect x="1067" y="932" width="1" height="3" fill="#ff0d0d"/><rect x="1067" y="938" width="1" height="9" fill="#ff0d0d"/><rect x="1067" y="950" width="1" height="3" fill="#ff0d0d"/><rect x="1067" y="956" width="1" height="9" fill="#ff0d0d"/><rect x="1067" y="968" width="1" height="3" fill="#ff0d0d"/><rect x="1067" y="974" width="1" height="9" fill="#ff0d0d"/><rect x="1067" y="986" width="1" height="3" fill="#ff0d0d"/><rect x="1172" y="130" width="1" height="1" fill="#ff0d0d"/><rect x="1172" y="134" width="1" height="9" fill="#ff0d0d"/><rect x="1172" y="146" width="1" height="3" fill="#ff0d0d"/><rect x="1172" y="152" width="1" height="3" fill="#ff0d0d"/><rect x="1172" y="158" width="1" height="9" fill="#ff0d0d"/><rect x="1172" y="170" width="1" height="3" fill="#ff0d0d"/><rect x="1172" y="176" width="1" height="3" fill="#ff0d0d"/><rect x="1172" y="182" width="1" height="9" fill="#ff0d0d"/><rect x="1172" y="194" width="1" height="3" fill="#ff0d0d"/><rect x="1172" y="200" width="1" height="3" fill="#ff0d0d"/><rect x="1172" y="206" width="1" height="9" fill="#ff0d0d"/><rect x="1172" y="218" width="1" height="3" fill="#ff0d0d"/><rect x="1172" y="224" width="1" height="3" fill="#ff0d0d"/><rect x="1172" y="230" width="1" height="9" fill="#ff0d0d"/><rect x="1172" y="242" width="1" height="3" fill="#ff0d0d"/><rect x="1172" y="248" width="1" height="3" fill="#ff0d0d"/><rect x="1172" y="254" width="1" height="9" fill="#ff0d0d"/><rect x="1172" y="266" width="1" height="3" fill="#ff0d0d"/><rect x="1172" y="272" width="1" height="3" fill="#ff0d0d"/><rect x="1172" y="278" width="1" height="9" fill="#ff0d0d"/><rect x="1172" y="290" width="1" height="3" fill="#ff0d0d"/><rect x="1172" y="296" width="1" height="3" fill="#ff0d0d"/><rect x="1172" y="302" width="1" height="9" fill="#ff0d0d"/><rect x="1172" y="314" width="1" height="3" fill="#ff0d0d"/><rect x="1172" y="320" width="1" height="3" fill="#ff0d0d"/><rect x="1172" y="326" width="1" height="9" fill="#ff0d0d"/><rect x="1172" y="338" width="1" height="3" fill="#ff0d0d"/><rect x="1172" y="344" width="1" height="3" fill="#ff0d0d"/><rect x="1172" y="350" width="1" height="9" fill="#ff0d0d"/><rect x="1172" y="362" width="1" height="3" fill="#ff0d0d"/><rect x="1172" y="368" width="1" height="3" fill="#ff0d0d"/><rect x="1172" y="374" width="1" height="9" fill="#ff0d0d"/><rect x="1172" y="386" width="1" height="3" fill="#ff0d0d"/><rect x="1172" y="392" width="1" height="3" fill="#ff0d0d"/><rect x="1172" y="398" width="1" height="9" fill="#ff0d0d"/><rect x="1172" y="410" width="1" height="3" fill="#ff0d0d"/><rect x="1172" y="416" width="1" height="3" fill="#ff0d0d"/><rect x="1172" y="422" width="1" height="9" fill="#ff0d0d"/><rect x="1172" y="434" width="1" height="3" fill="#ff0d0d"/><rect x="1172" y="440" width="1" height="3" fill="#ff0d0d"/><rect x="1172" y="446" width="1" height="9" fill="#ff0d0d"/><rect x="1172" y="458" width="1" height="3" fill="#ff0d0d"/><rect x="1172" y="464" width="1" height="3" fill="#ff0d0d"/><rect x="1172" y="470" width="1" height="9" fill="#ff0d0d"/><rect x="1172" y="482" width="1" height="3" fill="#ff0d0d"/><rect x="1172" y="488" width="1" height="3" fill="#ff0d0d"/><rect x="1172" y="494" width="1" height="9" fill="#ff0d0d"/><rect x="1172" y="506" width="1" height="3" fill="#ff0d0d"/><rect x="1172" y="512" width="1" height="3" fill="#ff0d0d"/><rect x="1172" y="518" width="1" height="9" fill="#ff0d0d"/><rect x="1172" y="530" width="1" height="3" fill="#ff0d0d"/><rect x="1172" y="536" width="1" height="3" fill="#ff0d0d"/><rect x="1172" y="542" width="1" height="9" fill="#ff0d0d"/><rect x="1172" y="554" width="1" height="3" fill="#ff0d0d"/><rect x="1172" y="560" width="1" height="3" fill="#ff0d0d"/><rect x="1172" y="566" width="1" height="9" fill="#ff0d0d"/><rect x="1172" y="578" width="1" height="3" fill="#ff0d0d"/><rect x="1172" y="584" width="1" height="3" fill="#ff0d0d"/><rect x="1172" y="590" width="1" height="9" fill="#ff0d0d"/><rect x="1172" y="602" width="1" height="3" fill="#ff0d0d"/><rect x="1172" y="608" width="1" height="3" fill="#ff0d0d"/><rect x="1172" y="614" width="1" height="9" fill="#ff0d0d"/><rect x="1172" y="626" width="1" height="3" fill="#ff0d0d"/><rect x="1172" y="632" width="1" height="3" fill="#ff0d0d"/><rect x="1172" y="638" width="1" height="9" fill="#ff0d0d"/><rect x="1172" y="650" width="1" height="3" fill="#ff0d0d"/><rect x="1172" y="656" width="1" height="3" fill="#ff0d0d"/><rect x="1172" y="662" width="1" height="9" fill="#ff0d0d"/><rect x="1172" y="674" width="1" height="3" fill="#ff0d0d"/><rect x="1172" y="680" width="1" height="3" fill="#ff0d0d"/><rect x="1172" y="686" width="1" height="9" fill="#ff0d0d"/><rect x="1172" y="698" width="1" height="3" fill="#ff0d0d"/><rect x="1172" y="704" width="1" height="3" fill="#ff0d0d"/><rect x="1172" y="710" width="1" height="9" fill="#ff0d0d"/><rect x="1172" y="722" width="1" height="3" fill="#ff0d0d"/><rect x="1172" y="728" width="1" height="3" fill="#ff0d0d"/><rect x="1172" y="734" width="1" height="9" fill="#ff0d0d"/><rect x="1172" y="746" width="1" height="3" fill="#ff0d0d"/><rect x="1172" y="752" width="1" height="3" fill="#ff0d0d"/><rect x="1172" y="758" width="1" height="9" fill="#ff0d0d"/><rect x="1172" y="770" width="1" height="3" fill="#ff0d0d"/><rect x="1172" y="776" width="1" height="3" fill="#ff0d0d"/><rect x="1172" y="782" width="1" height="9" fill="#ff0d0d"/><rect x="1172" y="794" width="1" height="3" fill="#ff0d0d"/><rect x="1172" y="800" width="1" height="3" fill="#ff0d0d"/><rect x="1172" y="806" width="1" height="9" fill="#ff0d0d"/><rect x="1172" y="818" width="1" height="3" fill="#ff0d0d"/><rect x="1172" y="824" width="1" height="3" fill="#ff0d0d"/><rect x="1172" y="830" width="1" height="9" fill="#ff0d0d"/><rect x="1172" y="842" width="1" height="3" fill="#ff0d0d"/><rect x="1172" y="848" width="1" height="3" fill="#ff0d0d"/><rect x="1172" y="854" width="1" height="9" fill="#ff0d0d"/><rect x="1172" y="866" width="1" height="3" fill="#ff0d0d"/><rect x="1172" y="872" width="1" height="3" fill="#ff0d0d"/><rect x="1172" y="878" width="1" height="9" fill="#ff0d0d"/><rect x="1172" y="890" width="1" height="3" fill="#ff0d0d"/><rect x="1172" y="896" width="1" height="3" fill="#ff0d0d"/><rect x="1172" y="902" width="1" height="9" fill="#ff0d0d"/><rect x="1172" y="914" width="1" height="3" fill="#ff0d0d"/><rect x="1172" y="920" width="1" height="3" fill="#ff0d0d"/><rect x="1172" y="926" width="1" height="9" fill="#ff0d0d"/><rect x="1172" y="938" width="1" height="3" fill="#ff0d0d"/><rect x="1172" y="944" width="1" height="3" fill="#ff0d0d"/><rect x="1172" y="950" width="1" height="9" fill="#ff0d0d"/><rect x="1172" y="962" width="1" height="3" fill="#ff0d0d"/><rect x="1172" y="968" width="1" height="3" fill="#ff0d0d"/><rect x="1172" y="974" width="1" height="9" fill="#ff0d0d"/><rect x="1172" y="986" width="1" height="3" fill="#ff0d0d"/><rect x="1285" y="130" width="2" height="1" fill="#ff0d0d"/><rect x="1285" y="134" width="2" height="9" fill="#ff0d0d"/><rect x="1285" y="146" width="2" height="9" fill="#ff0d0d"/><rect x="1285" y="158" width="2" height="9" fill="#ff0d0d"/><rect x="1285" y="170" width="2" height="9" fill="#ff0d0d"/><rect x="1285" y="182" width="2" height="9" fill="#ff0d0d"/><rect x="1285" y="194" width="2" height="9" fill="#ff0d0d"/><rect x="1285" y="206" width="2" height="9" fill="#ff0d0d"/><rect x="1285" y="218" width="2" height="9" fill="#ff0d0d"/><rect x="1285" y="230" width="2" height="9" fill="#ff0d0d"/><rect x="1285" y="242" width="2" height="9" fill="#ff0d0d"/><rect x="1285" y="254" width="2" height="9" fill="#ff0d0d"/><rect x="1285" y="266" width="2" height="9" fill="#ff0d0d"/><rect x="1285" y="278" width="2" height="9" fill="#ff0d0d"/><rect x="1285" y="290" width="2" height="9" fill="#ff0d0d"/><rect x="1285" y="302" width="2" height="9" fill="#ff0d0d"/><rect x="1285" y="314" width="2" height="9" fill="#ff0d0d"/><rect x="1285" y="326" width="2" height="9" fill="#ff0d0d"/><rect x="1285" y="338" width="2" height="9" fill="#ff0d0d"/><rect x="1285" y="350" width="2" height="9" fill="#ff0d0d"/><rect x="1285" y="362" width="2" height="9" fill="#ff0d0d"/><rect x="1285" y="374" width="2" height="9" fill="#ff0d0d"/><rect x="1285" y="386" width="2" height="9" fill="#ff0d0d"/><rect x="1285" y="398" width="2" height="9" fill="#ff0d0d"/><rect x="1285" y="410" width="2" height="9" fill="#ff0d0d"/><rect x="1285" y="422" width="2" height="9" fill="#ff0d0d"/><rect x="1285" y="434" width="2" height="9" fill="#ff0d0d"/><rect x="1285" y="446" width="2" height="9" fill="#ff0d0d"/><rect x="1285" y="458" width="2" height="9" fill="#ff0d0d"/><rect x="1285" y="470" width="2" height="9" fill="#ff0d0d"/><rect x="1285" y="482" width="2" height="9" fill="#ff0d0d"/><rect x="1285" y="494" width="2" height="9" fill="#ff0d0d"/><rect x="1285" y="506" width="2" height="9" fill="#ff0d0d"/><rect x="1285" y="518" width="2" height="9" fill="#ff0d0d"/><rect x="1285" y="530" width="2" height="9" fill="#ff0d0d"/><rect x="1285" y="542" width="2" height="9" fill="#ff0d0d"/><rect x="1285" y="554" width="2" height="9" fill="#ff0d0d"/><rect x="1285" y="566" width="2" height="9" fill="#ff0d0d"/><rect x="1285" y="578" width="2" height="9" fill="#ff0d0d"/><rect x="1285" y="590" width="2" height="9" fill="#ff0d0d"/><rect x="1285" y="602" width="2" height="9" fill="#ff0d0d"/><rect x="1285" y="614" width="2" height="9" fill="#ff0d0d"/><rect x="1285" y="626" width="2" height="9" fill="#ff0d0d"/><rect x="1285" y="638" width="2" height="9" fill="#ff0d0d"/><rect x="1285" y="650" width="2" height="9" fill="#ff0d0d"/><rect x="1285" y="662" width="2" height="9" fill="#ff0d0d"/><rect x="1285" y="674" width="2" height="9" fill="#ff0d0d"/><rect x="1285" y="686" width="2" height="9" fill="#ff0d0d"/><rect x="1285" y="698" width="2" height="9" fill="#ff0d0d"/><rect x="1285" y="710" width="2" height="9" fill="#ff0d0d"/><rect x="1285" y="722" width="2" height="9" fill="#ff0d0d"/><rect x="1285" y="734" width="2" height="9" fill="#ff0d0d"/><rect x="1285" y="746" width="2" height="9" fill="#ff0d0d"/><rect x="1285" y="758" width="2" height="9" fill="#ff0d0d"/><rect x="1285" y="770" width="2" height="9" fill="#ff0d0d"/><rect x="1285" y="782" width="2" height="9" fill="#ff0d0d"/><rect x="1285" y="794" width="2" height="9" fill="#ff0d0d"/><rect x="1285" y="806" width="2" height="9" fill="#ff0d0d"/><rect x="1285" y="818" width="2" height="9" fill="#ff0d0d"/><rect x="1285" y="830" width="2" height="9" fill="#ff0d0d"/><rect x="1285" y="842" width="2" height="9" fill="#ff0d0d"/><rect x="1285" y="854" width="2" height="9" fill="#ff0d0d"/><rect x="1285" y="866" width="2" height="9" fill="#ff0d0d"/><rect x="1285" y="878" width="2" height="9" fill="#ff0d0d"/><rect x="1285" y="890" width="2" height="9" fill="#ff0d0d"/><rect x="1285" y="902" width="2" height="9" fill="#ff0d0d"/><rect x="1285" y="914" width="2" height="9" fill="#ff0d0d"/><rect x="1285" y="926" width="2" height="9" fill="#ff0d0d"/><rect x="1285" y="938" width="2" height="9" fill="#ff0d0d"/><rect x="1285" y="950" width="2" height="9" fill="#ff0d0d"/><rect x="1285" y="962" width="2" height="9" fill="#ff0d0d"/><rect x="1285" y="974" width="2" height="9" fill="#ff0d0d"/><rect x="1285" y="986" width="2" height="4" fill="#ff0d0d"/></svg>
<div class="gb" style="left:64px;top:135px;width:145px;height:33px"></div>
<span class="t" style="left:128.70px;top:139.97px;font-size:13.5px;line-height:22px;color:#fff;transform:scaleX(0.9397);">A1</span>
<div class="gb" style="left:64px;top:173px;width:145px;height:31px"></div>
<span class="t" style="left:104.60px;top:179.17px;font-size:13.5px;line-height:22px;color:#fff;transform:scaleX(0.8953);">LAST ROW</span>
<div class="bb" style="left:309px;top:134px;width:85px;height:31px"></div>
<span class="t" style="left:327.20px;top:140.17px;font-size:13.5px;line-height:22px;color:#fff;transform:scaleX(0.9195);">WK PAIR</span>
<div class="bb" style="left:307px;top:172px;width:61px;height:32px"></div>
<span class="t" style="left:318.89px;top:178.17px;font-size:13.5px;line-height:22px;color:#fff;transform:scaleX(0.8086);">E SETS</span>
<div class="bb" style="left:308px;top:210px;width:61px;height:32px"></div>
<span class="t" style="left:319.59px;top:216.37px;font-size:13.5px;line-height:22px;color:#fff;transform:scaleX(0.8104);">G SETS</span>
<div class="bb" style="left:440px;top:134px;width:85px;height:31px"></div>
<span class="t" style="left:464.19px;top:140.17px;font-size:13.5px;line-height:22px;color:#fff;transform:scaleX(0.8301);">TRIPLE</span>
<div class="bb" style="left:440px;top:172px;width:61px;height:32px"></div>
<span class="t" style="left:453.30px;top:178.17px;font-size:13.5px;line-height:22px;color:#fff;transform:scaleX(0.8000);">J SETS</span>
<div class="bb" style="left:441px;top:210px;width:61px;height:32px"></div>
<span class="t" style="left:453.67px;top:216.37px;font-size:13.5px;line-height:22px;color:#fff;transform:scaleX(0.8315);">L SETS</span>
<div class="bb" style="left:554px;top:134px;width:183px;height:31px"></div>
<span class="t" style="left:618.27px;top:140.17px;font-size:13.5px;line-height:22px;color:#fff;transform:scaleX(0.9255);">PAIR TOP</span>
<div class="bb" style="left:599px;top:171px;width:90px;height:32px"></div>
<span class="t" style="left:616.79px;top:177.07px;font-size:13.5px;line-height:22px;color:#fff;transform:scaleX(0.8550);">TOP SETS</span>
<div class="bb" style="left:760px;top:134px;width:183px;height:31px"></div>
<span class="t" style="left:818.78px;top:140.17px;font-size:13.5px;line-height:22px;color:#fff;transform:scaleX(0.8673);">TRIPLE TOP</span>
<div class="bb" style="left:796px;top:172px;width:90px;height:31px"></div>
<span class="t" style="left:803.29px;top:178.17px;font-size:13.5px;line-height:22px;color:#fff;transform:scaleX(0.8540);">TOP TRI SETS</span>
<div class="bb" style="left:959px;top:134px;width:207px;height:31px"></div>
<span class="t" style="left:1014.59px;top:140.17px;font-size:13.5px;line-height:22px;color:#fff;transform:scaleX(0.9104);">PAIR BASE &amp; TRI</span>
<div class="bb" style="left:967px;top:171px;width:90px;height:31px"></div>
<span class="t" style="left:981.66px;top:177.07px;font-size:13.5px;line-height:22px;color:#fff;transform:scaleX(0.8367);">BASE SETS</span>
<div class="bb" style="left:1071px;top:171px;width:90px;height:31px"></div>
<span class="t" style="left:1091.79px;top:177.07px;font-size:13.5px;line-height:22px;color:#fff;transform:scaleX(0.8333);">TRI SETS</span>
<div class="bb" style="left:1193px;top:134px;width:186px;height:31px"></div>
<span class="t" style="left:1258.51px;top:140.27px;font-size:13.5px;line-height:22px;color:#fff;transform:scaleX(0.8861);">RELATIVE</span>
<svg class="r" style="left:0;top:0" width="1345" height="1026">
<rect x="305.45" y="552.6" width="256.05" height="280.7" fill="none" stroke="#000" stroke-width="4.8"/>
<rect x="309.4" y="707.45" width="228" height="111" fill="none" stroke="#000" stroke-width="4.8"/>
<path d="M87 556.3H198L203 557.4H311.8" fill="none" stroke="#000" stroke-width="4.8" stroke-linecap="round" stroke-linejoin="round"/>
<rect x="685.5" y="573.5" width="525" height="337.9" fill="#fff" stroke="#000" stroke-width="5"/>
<line x1="538.5" y1="708.3" x2="715.5" y2="625.6" stroke="#000" stroke-width="4.4" stroke-linecap="round"/>
</svg>
<span class="t" style="left:738.57px;top:615.37px;font-size:13.5px;line-height:22px;color:#000;transform:scaleX(1.0640);">example</span>
<span class="t" style="left:738.04px;top:651.37px;font-size:13.5px;line-height:22px;color:#000;transform:scaleX(1.0555);">i want to see only the</span>
<span class="t" style="left:738.32px;top:669.37px;font-size:13.5px;line-height:22px;color:#000;transform:scaleX(1.0342);">pair that is only 3</span>
<span class="t" style="left:738.84px;top:687.37px;font-size:13.5px;line-height:22px;color:#000;transform:scaleX(1.0437);">times and exclude the</span>
<span class="t" style="left:738.32px;top:705.37px;font-size:13.5px;line-height:22px;color:#000;transform:scaleX(1.0433);">pairs below 3 times</span>
<div class="r" style="left:0px;top:110px;width:1345px;height:20px;background:#e6e6e6;"></div>
<div class="r" style="left:23px;top:110px;width:211px;height:18px;background:#d2d2d2;"></div>
<div class="r" style="left:23px;top:128px;width:211px;height:2px;background:#08593f;"></div>
<div class="r" style="left:0px;top:129px;width:23px;height:1px;background:#ababab;"></div>
<div class="r" style="left:233px;top:110px;width:1px;height:20px;background:#ababab;"></div>
<div class="r" style="left:240px;top:110px;width:1px;height:19px;background:#ababab;"></div>
<div class="r" style="left:295px;top:110px;width:1px;height:19px;background:#ababab;"></div>
<div class="r" style="left:309px;top:110px;width:1px;height:19px;background:#ababab;"></div>
<div class="r" style="left:331px;top:110px;width:1px;height:19px;background:#ababab;"></div>
<div class="r" style="left:354px;top:110px;width:1px;height:19px;background:#ababab;"></div>
<div class="r" style="left:381px;top:110px;width:1px;height:19px;background:#ababab;"></div>
<div class="r" style="left:411px;top:110px;width:1px;height:19px;background:#ababab;"></div>
<div class="r" style="left:435px;top:110px;width:1px;height:19px;background:#ababab;"></div>
<div class="r" style="left:463px;top:110px;width:1px;height:19px;background:#ababab;"></div>
<div class="r" style="left:477px;top:110px;width:1px;height:19px;background:#ababab;"></div>
<div class="r" style="left:512px;top:110px;width:1px;height:19px;background:#ababab;"></div>
<div class="r" style="left:536px;top:110px;width:1px;height:19px;background:#ababab;"></div>
<div class="r" style="left:553px;top:110px;width:1px;height:19px;background:#ababab;"></div>
<div class="r" style="left:582px;top:110px;width:1px;height:19px;background:#ababab;"></div>
<div class="r" style="left:606px;top:110px;width:1px;height:19px;background:#ababab;"></div>
<div class="r" style="left:634px;top:110px;width:1px;height:19px;background:#ababab;"></div>
<div class="r" style="left:655px;top:110px;width:1px;height:19px;background:#ababab;"></div>
<div class="r" style="left:683px;top:110px;width:1px;height:19px;background:#ababab;"></div>
<div class="r" style="left:711px;top:110px;width:1px;height:19px;background:#ababab;"></div>
<div class="r" style="left:739px;top:110px;width:1px;height:19px;background:#ababab;"></div>
<div class="r" style="left:757px;top:110px;width:1px;height:19px;background:#ababab;"></div>
<div class="r" style="left:785px;top:110px;width:1px;height:19px;background:#ababab;"></div>
<div class="r" style="left:809px;top:110px;width:1px;height:19px;background:#ababab;"></div>
<div class="r" style="left:837px;top:110px;width:1px;height:19px;background:#ababab;"></div>
<div class="r" style="left:860px;top:110px;width:1px;height:19px;background:#ababab;"></div>
<div class="r" style="left:888px;top:110px;width:1px;height:19px;background:#ababab;"></div>
<div class="r" style="left:916px;top:110px;width:1px;height:19px;background:#ababab;"></div>
<div class="r" style="left:944px;top:110px;width:1px;height:19px;background:#ababab;"></div>
<div class="r" style="left:962px;top:110px;width:1px;height:19px;background:#ababab;"></div>
<div class="r" style="left:983px;top:110px;width:1px;height:19px;background:#ababab;"></div>
<div class="r" style="left:1011px;top:110px;width:1px;height:19px;background:#ababab;"></div>
<div class="r" style="left:1039px;top:110px;width:1px;height:19px;background:#ababab;"></div>
<div class="r" style="left:1067px;top:110px;width:1px;height:19px;background:#ababab;"></div>
<div class="r" style="left:1088px;top:110px;width:1px;height:19px;background:#ababab;"></div>
<div class="r" style="left:1116px;top:110px;width:1px;height:19px;background:#ababab;"></div>
<div class="r" style="left:1144px;top:110px;width:1px;height:19px;background:#ababab;"></div>
<div class="r" style="left:1172px;top:110px;width:1px;height:19px;background:#ababab;"></div>
<div class="r" style="left:1190px;top:110px;width:1px;height:19px;background:#ababab;"></div>
<div class="r" style="left:1209px;top:110px;width:1px;height:19px;background:#ababab;"></div>
<div class="r" style="left:1228px;top:110px;width:1px;height:19px;background:#ababab;"></div>
<div class="r" style="left:1286px;top:110px;width:1px;height:19px;background:#ababab;"></div>
<div class="r" style="left:1305px;top:110px;width:1px;height:19px;background:#ababab;"></div>
<div class="r" style="left:1324px;top:110px;width:1px;height:19px;background:#ababab;"></div>
<div class="r" style="left:234px;top:129px;width:1111px;height:1px;background:#ababab;"></div>
<div class="r" style="left:233px;top:128px;width:1px;height:2px;background:#08593f;"></div>
<svg class="r" style="left:0;top:110px" width="23" height="20"><path d="M19 4.5V16H7.5Z" fill="#b4b4b4"/></svg>
<span class="t" style="left:125.03px;top:108.87px;font-size:13.5px;line-height:22px;color:#1b5e45;transform:scaleX(0.7700);">A</span>
<div class="r" style="left:0;top:0;width:240px;height:1026px;overflow:hidden"><span class="t" style="left:233.27px;top:108.87px;font-size:13.5px;line-height:22px;color:#262626;transform:scaleX(0.9300);">B</span></div>
<span class="t" style="left:264.65px;top:108.87px;font-size:13.5px;line-height:22px;color:#262626;transform:scaleX(0.7700);">C</span>
<span class="t" style="left:299.15px;top:108.87px;font-size:13.5px;line-height:22px;color:#262626;transform:scaleX(0.7700);">D</span>
<span class="t" style="left:317.34px;top:108.87px;font-size:13.5px;line-height:22px;color:#262626;transform:scaleX(0.7700);">E</span>
<span class="t" style="left:340.13px;top:108.87px;font-size:13.5px;line-height:22px;color:#262626;transform:scaleX(0.7700);">F</span>
<span class="t" style="left:364.55px;top:108.87px;font-size:13.5px;line-height:22px;color:#262626;transform:scaleX(0.7700);">G</span>
<span class="t" style="left:393.25px;top:108.87px;font-size:13.5px;line-height:22px;color:#262626;transform:scaleX(0.7700);">H</span>
<span class="t" style="left:422.56px;top:108.87px;font-size:13.5px;line-height:22px;color:#262626;transform:scaleX(0.7700);">I</span>
<span class="t" style="left:447.69px;top:108.87px;font-size:13.5px;line-height:22px;color:#262626;transform:scaleX(0.7700);">J</span>
<span class="t" style="left:467.25px;top:108.87px;font-size:13.5px;line-height:22px;color:#262626;transform:scaleX(0.7700);">K</span>
<span class="t" style="left:492.42px;top:108.87px;font-size:13.5px;line-height:22px;color:#262626;transform:scaleX(0.7700);">L</span>
<span class="t" style="left:520.67px;top:108.87px;font-size:13.5px;line-height:22px;color:#262626;transform:scaleX(0.7700);">M</span>
<span class="t" style="left:541.75px;top:108.87px;font-size:13.5px;line-height:22px;color:#262626;transform:scaleX(0.7700);">N</span>
<span class="t" style="left:564.46px;top:108.87px;font-size:13.5px;line-height:22px;color:#262626;transform:scaleX(0.7700);">O</span>
<span class="t" style="left:591.44px;top:108.87px;font-size:13.5px;line-height:22px;color:#262626;transform:scaleX(0.7700);">P</span>
<span class="t" style="left:616.96px;top:108.87px;font-size:13.5px;line-height:22px;color:#262626;transform:scaleX(0.7700);">Q</span>
<span class="t" style="left:641.65px;top:108.87px;font-size:13.5px;line-height:22px;color:#262626;transform:scaleX(0.7700);">R</span>
<span class="t" style="left:666.44px;top:108.87px;font-size:13.5px;line-height:22px;color:#262626;transform:scaleX(0.7700);">S</span>
<span class="t" style="left:694.82px;top:108.87px;font-size:13.5px;line-height:22px;color:#262626;transform:scaleX(0.7700);">T</span>
<span class="t" style="left:722.25px;top:108.87px;font-size:13.5px;line-height:22px;color:#262626;transform:scaleX(0.7700);">U</span>
<span class="t" style="left:745.53px;top:108.87px;font-size:13.5px;line-height:22px;color:#262626;transform:scaleX(0.7700);">V</span>
<span class="t" style="left:767.09px;top:108.87px;font-size:13.5px;line-height:22px;color:#262626;transform:scaleX(0.7700);">W</span>
<span class="t" style="left:794.44px;top:108.87px;font-size:13.5px;line-height:22px;color:#262626;transform:scaleX(0.7700);">X</span>
<span class="t" style="left:820.53px;top:108.87px;font-size:13.5px;line-height:22px;color:#262626;transform:scaleX(0.7700);">Y</span>
<span class="t" style="left:846.32px;top:108.87px;font-size:13.5px;line-height:22px;color:#262626;transform:scaleX(0.7700);">Z</span>
<span class="t" style="left:867.26px;top:108.87px;font-size:13.5px;line-height:22px;color:#262626;transform:scaleX(0.8600);">AA</span>
<span class="t" style="left:895.58px;top:108.87px;font-size:13.5px;line-height:22px;color:#262626;transform:scaleX(0.8600);">AB</span>
<span class="t" style="left:923.15px;top:108.87px;font-size:13.5px;line-height:22px;color:#262626;transform:scaleX(0.8600);">AC</span>
<div class="r" style="left:0;top:0;width:962px;height:1026px;overflow:hidden"><span class="t" style="left:945.20px;top:108.87px;font-size:13.5px;line-height:22px;color:#262626;transform:scaleX(0.9300);">AD</span></div>
<span class="t" style="left:965.98px;top:108.87px;font-size:13.5px;line-height:22px;color:#262626;transform:scaleX(0.8600);">AE</span>
<span class="t" style="left:990.80px;top:108.87px;font-size:13.5px;line-height:22px;color:#262626;transform:scaleX(0.8600);">AF</span>
<span class="t" style="left:1018.04px;top:108.87px;font-size:13.5px;line-height:22px;color:#262626;transform:scaleX(0.8600);">AG</span>
<span class="t" style="left:1046.37px;top:108.87px;font-size:13.5px;line-height:22px;color:#262626;transform:scaleX(0.8600);">AH</span>
<span class="t" style="left:1073.56px;top:108.87px;font-size:13.5px;line-height:22px;color:#262626;transform:scaleX(0.8600);">AI</span>
<span class="t" style="left:1096.66px;top:108.87px;font-size:13.5px;line-height:22px;color:#262626;transform:scaleX(0.8600);">AJ</span>
<span class="t" style="left:1123.37px;top:108.87px;font-size:13.5px;line-height:22px;color:#262626;transform:scaleX(0.8600);">AK</span>
<span class="t" style="left:1152.12px;top:108.87px;font-size:13.5px;line-height:22px;color:#262626;transform:scaleX(0.8600);">AL</span>
<div class="r" style="left:0;top:0;width:1190px;height:1026px;overflow:hidden"><span class="t" style="left:1173.20px;top:108.87px;font-size:13.5px;line-height:22px;color:#262626;transform:scaleX(0.9300);">AM</span></div>
<span class="t" style="left:1192.87px;top:108.87px;font-size:13.5px;line-height:22px;color:#262626;transform:scaleX(0.8600);">AN</span>
<div class="r" style="left:0;top:0;width:1228px;height:1026px;overflow:hidden"><span class="t" style="left:1210.20px;top:108.87px;font-size:13.5px;line-height:22px;color:#262626;transform:scaleX(0.9300);">AO</span></div>
<span class="t" style="left:1250.58px;top:108.87px;font-size:13.5px;line-height:22px;color:#262626;transform:scaleX(0.8600);">AP</span>
<div class="r" style="left:0;top:0;width:1305px;height:1026px;overflow:hidden"><span class="t" style="left:1287.20px;top:108.87px;font-size:13.5px;line-height:22px;color:#262626;transform:scaleX(0.9300);">AQ</span></div>
<span class="t" style="left:1307.76px;top:108.87px;font-size:13.5px;line-height:22px;color:#262626;transform:scaleX(0.8600);">AR</span>
<div class="r" style="left:0px;top:130px;width:22px;height:860px;background:#e6e6e6;"></div>
<div class="r" style="left:22px;top:110px;width:1px;height:880px;background:#9b9b9b;"></div>
<div class="r" style="left:0px;top:149px;width:22px;height:1px;background:#ababab;"></div>
<span class="t" style="left:2.78px;top:130.07px;font-size:13.5px;line-height:22px;color:#262626;transform:scaleX(0.9350);">1</span>
<div class="r" style="left:0px;top:169px;width:22px;height:1px;background:#ababab;"></div>
<span class="t" style="left:2.89px;top:150.07px;font-size:13.5px;line-height:22px;color:#262626;transform:scaleX(0.9350);">2</span>
<div class="r" style="left:0px;top:189px;width:22px;height:1px;background:#ababab;"></div>
<span class="t" style="left:2.89px;top:170.07px;font-size:13.5px;line-height:22px;color:#262626;transform:scaleX(0.9350);">3</span>
<div class="r" style="left:0px;top:247px;width:22px;height:1px;background:#9b9b9b;"></div>
<span class="t" style="left:2.89px;top:227.57px;font-size:13.5px;line-height:22px;color:#262626;transform:scaleX(0.9350);">4</span>
<div class="r" style="left:0px;top:267px;width:22px;height:1px;background:#ababab;"></div>
<span class="t" style="left:-1.10px;top:248.07px;font-size:13.5px;line-height:22px;color:#1f1f1f;transform:scaleX(0.9350);">711</span>
<div class="r" style="left:0px;top:287px;width:22px;height:1px;background:#ababab;"></div>
<span class="t" style="left:-2.04px;top:268.07px;font-size:13.5px;line-height:22px;color:#1f1f1f;transform:scaleX(0.9350);">712</span>
<div class="r" style="left:0px;top:307px;width:22px;height:1px;background:#ababab;"></div>
<span class="t" style="left:-2.27px;top:288.07px;font-size:13.5px;line-height:22px;color:#1f1f1f;transform:scaleX(0.9350);">713</span>
<div class="r" style="left:0px;top:327px;width:22px;height:1px;background:#ababab;"></div>
<span class="t" style="left:-2.50px;top:308.07px;font-size:13.5px;line-height:22px;color:#1f1f1f;transform:scaleX(0.9350);">714</span>
<div class="r" style="left:0px;top:347px;width:22px;height:1px;background:#ababab;"></div>
<span class="t" style="left:-2.27px;top:328.07px;font-size:13.5px;line-height:22px;color:#1f1f1f;transform:scaleX(0.9350);">715</span>
<div class="r" style="left:0px;top:367px;width:22px;height:1px;background:#ababab;"></div>
<span class="t" style="left:-2.27px;top:348.07px;font-size:13.5px;line-height:22px;color:#1f1f1f;transform:scaleX(0.9350);">716</span>
<div class="r" style="left:0px;top:387px;width:22px;height:1px;background:#ababab;"></div>
<span class="t" style="left:-2.04px;top:368.07px;font-size:13.5px;line-height:22px;color:#1f1f1f;transform:scaleX(0.9350);">717</span>
<div class="r" style="left:0px;top:407px;width:22px;height:1px;background:#ababab;"></div>
<span class="t" style="left:-2.27px;top:388.07px;font-size:13.5px;line-height:22px;color:#1f1f1f;transform:scaleX(0.9350);">718</span>
<div class="r" style="left:0px;top:427px;width:22px;height:1px;background:#ababab;"></div>
<span class="t" style="left:-2.27px;top:408.07px;font-size:13.5px;line-height:22px;color:#1f1f1f;transform:scaleX(0.9350);">719</span>
<div class="r" style="left:0px;top:447px;width:22px;height:1px;background:#ababab;"></div>
<span class="t" style="left:-2.27px;top:428.07px;font-size:13.5px;line-height:22px;color:#1f1f1f;transform:scaleX(0.9350);">720</span>
<div class="r" style="left:0px;top:467px;width:22px;height:1px;background:#ababab;"></div>
<span class="t" style="left:-2.04px;top:448.07px;font-size:13.5px;line-height:22px;color:#1f1f1f;transform:scaleX(0.9350);">721</span>
<div class="r" style="left:0px;top:487px;width:22px;height:1px;background:#ababab;"></div>
<span class="t" style="left:-2.04px;top:468.07px;font-size:13.5px;line-height:22px;color:#1f1f1f;transform:scaleX(0.9350);">722</span>
<div class="r" style="left:0px;top:507px;width:22px;height:1px;background:#ababab;"></div>
<span class="t" style="left:-2.27px;top:488.07px;font-size:13.5px;line-height:22px;color:#1f1f1f;transform:scaleX(0.9350);">723</span>
<div class="r" style="left:0px;top:527px;width:22px;height:1px;background:#ababab;"></div>
<span class="t" style="left:-2.50px;top:508.07px;font-size:13.5px;line-height:22px;color:#1f1f1f;transform:scaleX(0.9350);">724</span>
<div class="r" style="left:0px;top:547px;width:22px;height:1px;background:#ababab;"></div>
<span class="t" style="left:-2.27px;top:528.07px;font-size:13.5px;line-height:22px;color:#1f1f1f;transform:scaleX(0.9350);">725</span>
<div class="r" style="left:0px;top:567px;width:22px;height:1px;background:#ababab;"></div>
<span class="t" style="left:-2.27px;top:548.07px;font-size:13.5px;line-height:22px;color:#1f1f1f;transform:scaleX(0.9350);">726</span>
<div class="r" style="left:0px;top:587px;width:22px;height:1px;background:#ababab;"></div>
<span class="t" style="left:-2.04px;top:568.07px;font-size:13.5px;line-height:22px;color:#1f1f1f;transform:scaleX(0.9350);">727</span>
<div class="r" style="left:0px;top:607px;width:22px;height:1px;background:#ababab;"></div>
<span class="t" style="left:-2.27px;top:588.07px;font-size:13.5px;line-height:22px;color:#1f1f1f;transform:scaleX(0.9350);">728</span>
<div class="r" style="left:0px;top:627px;width:22px;height:1px;background:#ababab;"></div>
<span class="t" style="left:-2.27px;top:608.07px;font-size:13.5px;line-height:22px;color:#1f1f1f;transform:scaleX(0.9350);">729</span>
<div class="r" style="left:0px;top:647px;width:22px;height:1px;background:#ababab;"></div>
<span class="t" style="left:-2.27px;top:628.07px;font-size:13.5px;line-height:22px;color:#1f1f1f;transform:scaleX(0.9350);">730</span>
<div class="r" style="left:0px;top:667px;width:22px;height:1px;background:#ababab;"></div>
<span class="t" style="left:-2.04px;top:648.07px;font-size:13.5px;line-height:22px;color:#1f1f1f;transform:scaleX(0.9350);">731</span>
<div class="r" style="left:0px;top:687px;width:22px;height:1px;background:#ababab;"></div>
<span class="t" style="left:-2.04px;top:668.07px;font-size:13.5px;line-height:22px;color:#1f1f1f;transform:scaleX(0.9350);">732</span>
<div class="r" style="left:0px;top:707px;width:22px;height:1px;background:#ababab;"></div>
<span class="t" style="left:-2.27px;top:688.07px;font-size:13.5px;line-height:22px;color:#1f1f1f;transform:scaleX(0.9350);">733</span>
<div class="r" style="left:0px;top:727px;width:22px;height:1px;background:#ababab;"></div>
<span class="t" style="left:-2.50px;top:708.07px;font-size:13.5px;line-height:22px;color:#1f1f1f;transform:scaleX(0.9350);">734</span>
<div class="r" style="left:0px;top:747px;width:22px;height:1px;background:#ababab;"></div>
<span class="t" style="left:-2.27px;top:728.07px;font-size:13.5px;line-height:22px;color:#1f1f1f;transform:scaleX(0.9350);">735</span>
<div class="r" style="left:0px;top:767px;width:22px;height:1px;background:#ababab;"></div>
<span class="t" style="left:-2.27px;top:748.07px;font-size:13.5px;line-height:22px;color:#1f1f1f;transform:scaleX(0.9350);">736</span>
<div class="r" style="left:0px;top:787px;width:22px;height:1px;background:#ababab;"></div>
<span class="t" style="left:-2.04px;top:768.07px;font-size:13.5px;line-height:22px;color:#1f1f1f;transform:scaleX(0.9350);">737</span>
<div class="r" style="left:0px;top:807px;width:22px;height:1px;background:#ababab;"></div>
<span class="t" style="left:-2.27px;top:788.07px;font-size:13.5px;line-height:22px;color:#1f1f1f;transform:scaleX(0.9350);">738</span>
<div class="r" style="left:0px;top:827px;width:22px;height:1px;background:#ababab;"></div>
<span class="t" style="left:-2.27px;top:808.07px;font-size:13.5px;line-height:22px;color:#1f1f1f;transform:scaleX(0.9350);">739</span>
<div class="r" style="left:0px;top:847px;width:22px;height:1px;background:#ababab;"></div>
<span class="t" style="left:-2.27px;top:828.07px;font-size:13.5px;line-height:22px;color:#1f1f1f;transform:scaleX(0.9350);">740</span>
<div class="r" style="left:0px;top:867px;width:22px;height:1px;background:#ababab;"></div>
<span class="t" style="left:-2.04px;top:848.07px;font-size:13.5px;line-height:22px;color:#1f1f1f;transform:scaleX(0.9350);">741</span>
<div class="r" style="left:0px;top:887px;width:22px;height:1px;background:#ababab;"></div>
<span class="t" style="left:-2.04px;top:868.07px;font-size:13.5px;line-height:22px;color:#1f1f1f;transform:scaleX(0.9350);">742</span>
<div class="r" style="left:0px;top:907px;width:22px;height:1px;background:#ababab;"></div>
<span class="t" style="left:-2.27px;top:888.07px;font-size:13.5px;line-height:22px;color:#1f1f1f;transform:scaleX(0.9350);">743</span>
<div class="r" style="left:0px;top:927px;width:22px;height:1px;background:#ababab;"></div>
<span class="t" style="left:-2.50px;top:908.07px;font-size:13.5px;line-height:22px;color:#1f1f1f;transform:scaleX(0.9350);">744</span>
<div class="r" style="left:0px;top:947px;width:22px;height:1px;background:#ababab;"></div>
<span class="t" style="left:-2.27px;top:928.07px;font-size:13.5px;line-height:22px;color:#1f1f1f;transform:scaleX(0.9350);">745</span>
<div class="r" style="left:0px;top:967px;width:22px;height:1px;background:#ababab;"></div>
<span class="t" style="left:-2.27px;top:948.07px;font-size:13.5px;line-height:22px;color:#1f1f1f;transform:scaleX(0.9350);">746</span>
<div class="r" style="left:0px;top:987px;width:22px;height:1px;background:#ababab;"></div>
<span class="t" style="left:-2.04px;top:968.07px;font-size:13.5px;line-height:22px;color:#1f1f1f;transform:scaleX(0.9350);">747</span>
<div class="r" style="left:0px;top:0px;width:1345px;height:64px;background:#166352;"></div>
<div class="r" style="left:0px;top:64px;width:1345px;height:46px;background:#e6e6e6;"></div>
<div class="r" style="left:34px;top:2px;width:26px;height:29px;background:#025040;"></div>
<div class="r" style="left:60px;top:2px;width:9px;height:29px;background:#14604c;box-shadow:inset 0 0 0 1px #0a5643"></div>
<svg class="r" style="left:0;top:0" width="140" height="34">
<rect x="12.1" y="9.8" width="14" height="14.3" rx="0.7" fill="#fbfbfb"/>
<path d="M14.3 11.1H24V15.2L23.4 16.6H14.9L14.3 15.2Z" fill="#166352"/>
<rect x="15.2" y="18.9" width="8.1" height="3.9" fill="#166352"/>
<rect x="17" y="21.2" width="1.9" height="1.7" fill="#fbfbfb"/>
<g fill="none" stroke="#fbfbfb" stroke-linejoin="miter">
<path d="M46.9 10.2L42 14.4L46.9 18.2" stroke-width="2.5"/>
<path d="M42.6 14.5H49.6C55.6 14.5 56.2 22.3 49.4 22.3" stroke-width="2.2"/>
</g>
<path d="M61 15.2H66.2L63.6 18.1Z" fill="#fff"/>
<g fill="none" stroke="#4a917c">
<path d="M85.1 10.2L90 14.4L85.1 18.2" stroke-width="2.5"/>
<path d="M89.4 14.5H82.4C76.4 14.5 75.8 22.3 82.6 22.3" stroke-width="2.2"/>
</g>
<path d="M97.3 15.2H102.4L99.8 18.1Z" fill="#4a917c"/>
<rect x="117" y="13.9" width="5.6" height="1.3" fill="#fff"/>
<path d="M116.8 16.5H122.8L119.8 20Z" fill="#fff"/>
</svg>
<span class="t" style="left:894.74px;top:7.87px;font-size:12px;line-height:19px;color:#fff;transform:scaleX(0.9216);">29207381 (1)  -  Excel</span>
<span class="t" style="left:9.38px;top:39.87px;font-size:12px;line-height:19px;color:#fff;transform:scaleX(1.0197);">File</span>
<span class="t" style="left:62.23px;top:39.87px;font-size:12px;line-height:19px;color:#fff;transform:scaleX(1.0721);">Home</span>
<span class="t" style="left:122.41px;top:39.87px;font-size:12px;line-height:19px;color:#fff;transform:scaleX(0.9862);">Insert</span>
<span class="t" style="left:178.32px;top:39.87px;font-size:12px;line-height:19px;color:#fff;transform:scaleX(0.9751);">Page Layout</span>
<span class="t" style="left:270.19px;top:39.87px;font-size:12px;line-height:19px;color:#fff;transform:scaleX(1.0062);">Formulas</span>
<span class="t" style="left:346.44px;top:39.87px;font-size:12px;line-height:19px;color:#fff;transform:scaleX(0.9633);">Data</span>
<span class="t" style="left:397.44px;top:39.87px;font-size:12px;line-height:19px;color:#fff;transform:scaleX(0.9569);">Review</span>
<span class="t" style="left:462.40px;top:39.87px;font-size:12px;line-height:19px;color:#fff;transform:scaleX(0.9476);">View</span>
<span class="t" style="left:513.36px;top:39.87px;font-size:12px;line-height:19px;color:#fff;transform:scaleX(1.0366);">Help</span>
<span class="t" style="left:594.45px;top:39.87px;font-size:12px;line-height:19px;color:#fff;transform:scaleX(1.0119);">Tell me what you want to do</span>
<svg class="r" style="left:566px;top:39px" width="18" height="20">
<path d="M8.6 2.6C5.6 2.6 3.7 4.8 3.7 7.2C3.7 9.4 5.2 10.4 5.9 11.6C6.3 12.3 6.3 13.2 6.3 13.8H10.9C10.9 13.2 10.9 12.3 11.3 11.6C12 10.4 13.5 9.4 13.5 7.2C13.5 4.8 11.6 2.6 8.6 2.6Z" fill="none" stroke="#fff" stroke-width="1.1"/>
<rect x="6.3" y="15.1" width="4.6" height="1" fill="#fff"/><rect x="7" y="17" width="3.2" height="1" fill="#fff"/>
</svg>
<div class="r" style="left:-1px;top:74px;width:98px;height:26px;background:#fff;box-shadow:inset 0 0 0 1px #c6c6c6"></div>
<span class="t" style="left:2.20px;top:77.27px;font-size:13px;line-height:21px;color:#444;transform:scaleX(0.9838);">A6779</span>
<svg class="r" style="left:80px;top:82px" width="14" height="8"><path d="M2.8 2.2H10L6.4 6Z" fill="#777"/></svg>
<div class="r" style="left:111px;top:81.5px;width:2px;height:2px;background:#b0b0b0;"></div>
<div class="r" style="left:111px;top:85.5px;width:2px;height:2px;background:#b0b0b0;"></div>
<div class="r" style="left:111px;top:89.5px;width:2px;height:2px;background:#b0b0b0;"></div>
<div class="r" style="left:127px;top:74px;width:110px;height:26px;background:#fff;box-shadow:inset 0 0 0 1px #c6c6c6"></div>
<svg class="r" style="left:127px;top:74px" width="110" height="26">
<path d="M13.6 8.6L24.2 18.2M24.2 8.6L13.6 18.2" stroke="#c1c1c1" stroke-width="1.9" fill="none"/>
<path d="M49.3 14L53.6 18L61.2 8.6" stroke="#c1c1c1" stroke-width="2.2" fill="none"/>
</svg>
<span class="t" style="left:212.40px;top:76.36px;font-size:14px;line-height:22px;color:#5a5a5a;font-family:'Liberation Serif',serif;font-weight:bold;font-style:italic;transform:scaleX(1.0783);">f</span>
<span class="t" style="left:218.20px;top:81.97px;font-size:10px;line-height:16px;color:#5a5a5a;font-family:'Liberation Serif',serif;font-weight:bold;font-style:italic;transform:scaleX(1.2632);">x</span>
<div class="r" style="left:240px;top:74px;width:1107px;height:26px;background:#fff;box-shadow:inset 0 0 0 1px #c6c6c6"></div>
<div class="r" style="left:0px;top:990px;width:1345px;height:29px;background:#e6e6e6;"></div>
<div class="r" style="left:0px;top:990px;width:1345px;height:1px;background:#9b9b9b;"></div>
<div class="r" style="left:0px;top:1018px;width:1345px;height:1px;background:#c8c8c8;"></div>
<div class="r" style="left:0px;top:1019px;width:1345px;height:7px;background:#f3f3f3;"></div>
<div class="r" style="left:90px;top:990px;width:66px;height:23px;background:#fff;"></div>
<div class="r" style="left:90px;top:990px;width:1px;height:23px;background:#9b9b9b;"></div>
<div class="r" style="left:155px;top:990px;width:1px;height:23px;background:#9b9b9b;"></div>
<div class="r" style="left:90px;top:1013px;width:66px;height:2px;background:#0a5a41;"></div>
<span class="t" style="left:101.55px;top:992.76px;font-size:14px;line-height:22px;color:#0f5640;font-weight:bold;transform:scaleX(0.8933);">Sheet1</span>
<span class="t" style="left:167.28px;top:992.87px;font-size:13px;line-height:21px;color:#444;transform:scaleX(1.0222);">Match 2D</span>
<span class="t" style="left:249.76px;top:992.87px;font-size:13px;line-height:21px;color:#444;transform:scaleX(0.8447);">E SETS</span>
<span class="t" style="left:313.85px;top:992.87px;font-size:13px;line-height:21px;color:#444;transform:scaleX(0.8670);">G SETS</span>
<span class="t" style="left:381.19px;top:992.87px;font-size:13px;line-height:21px;color:#444;transform:scaleX(0.8347);">J SETS</span>
<span class="t" style="left:443.74px;top:992.87px;font-size:13px;line-height:21px;color:#444;transform:scaleX(0.8632);">L SETS</span>
<span class="t" style="left:506.03px;top:992.87px;font-size:13px;line-height:21px;color:#444;transform:scaleX(0.8747);">R SETS</span>
<span class="t" style="left:572.88px;top:992.87px;font-size:13px;line-height:21px;color:#444;transform:scaleX(0.8652);">T SETS</span>
<span class="t" style="left:637.56px;top:992.87px;font-size:13px;line-height:21px;color:#444;transform:scaleX(0.8719);">Z SETS</span>
<span class="t" style="left:703.30px;top:992.87px;font-size:13px;line-height:21px;color:#444;transform:scaleX(0.8498);">AB SETS</span>
<span class="t" style="left:777.20px;top:992.87px;font-size:13px;line-height:21px;color:#444;transform:scaleX(0.8516);">AE SETS</span>
<span class="t" style="left:850.10px;top:992.87px;font-size:13px;line-height:21px;color:#444;transform:scaleX(0.8448);">AG SETS</span>
<span class="t" style="left:925.10px;top:992.87px;font-size:13px;line-height:21px;color:#444;transform:scaleX(0.8629);">AI SETS</span>
<span class="t" style="left:995.00px;top:992.87px;font-size:13px;line-height:21px;color:#444;transform:scaleX(0.8756);">AK SETS</span>
<span class="t" style="left:1069.00px;top:992.87px;font-size:13px;line-height:21px;color:#444;transform:scaleX(0.8756);">AX SETS</span>
<span class="t" style="left:1144.20px;top:992.87px;font-size:13px;line-height:21px;color:#444;transform:scaleX(0.8710);">AZ SETS</span>
<span class="t" style="left:1217.37px;top:992.87px;font-size:13px;line-height:21px;color:#444;transform:scaleX(0.8267);">BF</span>
<div class="r" style="left:238px;top:993px;width:1px;height:21px;background:#ababab;"></div>
<div class="r" style="left:302px;top:993px;width:1px;height:21px;background:#ababab;"></div>
<div class="r" style="left:368px;top:993px;width:1px;height:21px;background:#ababab;"></div>
<div class="r" style="left:431px;top:993px;width:1px;height:21px;background:#ababab;"></div>
<div class="r" style="left:495px;top:993px;width:1px;height:21px;background:#ababab;"></div>
<div class="r" style="left:560px;top:993px;width:1px;height:21px;background:#ababab;"></div>
<div class="r" style="left:625px;top:993px;width:1px;height:21px;background:#ababab;"></div>
<div class="r" style="left:690px;top:993px;width:1px;height:21px;background:#ababab;"></div>
<div class="r" style="left:764px;top:993px;width:1px;height:21px;background:#ababab;"></div>
<div class="r" style="left:837px;top:993px;width:1px;height:21px;background:#ababab;"></div>
<div class="r" style="left:912px;top:993px;width:1px;height:21px;background:#ababab;"></div>
<div class="r" style="left:982px;top:993px;width:1px;height:21px;background:#ababab;"></div>
<div class="r" style="left:1056px;top:993px;width:1px;height:21px;background:#ababab;"></div>
<div class="r" style="left:1131px;top:993px;width:1px;height:21px;background:#ababab;"></div>
<div class="r" style="left:1205px;top:993px;width:1px;height:21px;background:#ababab;"></div>
<svg class="r" style="left:0;top:990px" width="1345" height="29">
<path d="M21.2 10V17.1L17 13.55Z" fill="#c3c3c3"/>
<path d="M45.9 9.8V17.3L50.3 13.55Z" fill="#0c523b"/>
<rect x="1243" y="15.5" width="2.3" height="2.4" fill="#0f5038"/><rect x="1247.1" y="15.5" width="2.3" height="2.4" fill="#0f5038"/><rect x="1251.2" y="15.5" width="2.3" height="2.4" fill="#0f5038"/>
<circle cx="1275" cy="14" r="7.3" fill="none" stroke="#747474" stroke-width="1.3"/>
<path d="M1271 14H1279M1275 10V18" stroke="#747474" stroke-width="1.6"/>
<rect x="1303.1" y="9.2" width="2" height="1.9" fill="#adadad"/><rect x="1303.1" y="13.1" width="2" height="1.9" fill="#adadad"/><rect x="1303.1" y="17" width="2" height="1.9" fill="#adadad"/>
<rect x="1320.5" y="7.5" width="14" height="14" fill="#fff" stroke="#ababab" stroke-width="1"/>
<path d="M1329 11.2V18L1325 14.6Z" fill="#777"/>
<rect x="1335.5" y="7.5" width="14" height="14" fill="#fff" stroke="#ababab" stroke-width="1"/>
</svg>
</body></html>
